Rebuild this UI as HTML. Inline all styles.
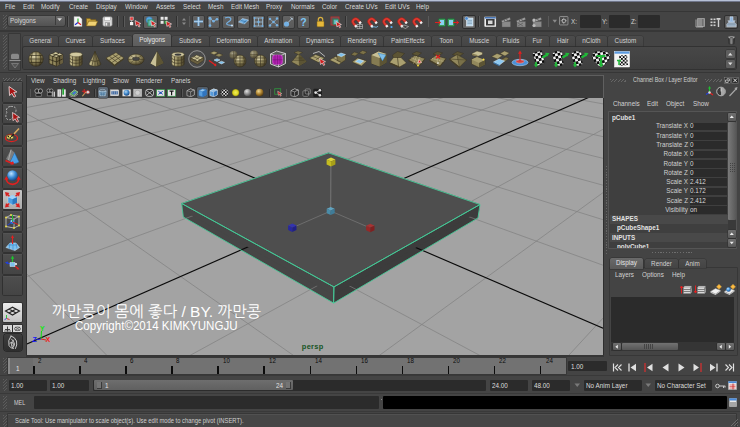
<!DOCTYPE html>
<html><head><meta charset="utf-8"><title>Maya</title>
<style>
html,body{margin:0;padding:0;background:#444;}
body{width:740px;height:427px;overflow:hidden;position:relative;font-family:"Liberation Sans","NanumGothic","Noto Sans CJK KR",sans-serif;font-size:7.200px;color:#d2d2d2;}
.a{position:absolute;}
.t{position:absolute;white-space:nowrap;line-height:10px;}
.f{position:absolute;background:#2b2b2b;border-radius:1px;}
.btn{position:absolute;background:#5a5a5a;border:1px solid #333;border-radius:2px;box-sizing:border-box;}
.sep{position:absolute;width:.7px;background:#303030;border-right:.7px solid #5a5a5a;}
.t{transform:scaleX(.88);transform-origin:0 0;}
.t.r{text-align:right;transform-origin:100% 0;}
.t.c{text-align:center;transform-origin:50% 0;}
.t.b{font-weight:bold;}
.grip{position:absolute;width:4px;background:repeating-linear-gradient(135deg,#5c5c5c 0 .8px,transparent .8px 2.200px);}
.hgrip{position:absolute;height:3px;background:repeating-linear-gradient(135deg,#666 0 .8px,transparent .8px 2.400px);}
.wm{position:absolute;white-space:nowrap;color:#fff;font-family:"Liberation Sans","NanumGothic","Noto Sans CJK KR",sans-serif;}
svg{overflow:hidden}
</style></head><body>

<div class="a" style="left:0;top:0;width:740px;height:1px;background:#b6c0d6"></div>
<div class="a" style="left:0;top:1px;width:740px;height:.6px;background:#70768a"></div>
<div class="t" style="left:4.5px;top:2.300px;color:#dadada">File</div>
<div class="t" style="left:22.5px;top:2.300px;color:#dadada">Edit</div>
<div class="t" style="left:41px;top:2.300px;color:#dadada">Modify</div>
<div class="t" style="left:69px;top:2.300px;color:#dadada">Create</div>
<div class="t" style="left:96px;top:2.300px;color:#dadada">Display</div>
<div class="t" style="left:124.5px;top:2.300px;color:#dadada">Window</div>
<div class="t" style="left:155.5px;top:2.300px;color:#dadada">Assets</div>
<div class="t" style="left:183px;top:2.300px;color:#dadada">Select</div>
<div class="t" style="left:207.5px;top:2.300px;color:#dadada">Mesh</div>
<div class="t" style="left:231px;top:2.300px;color:#dadada">Edit Mesh</div>
<div class="t" style="left:266px;top:2.300px;color:#dadada">Proxy</div>
<div class="t" style="left:291px;top:2.300px;color:#dadada">Normals</div>
<div class="t" style="left:322px;top:2.300px;color:#dadada">Color</div>
<div class="t" style="left:345px;top:2.300px;color:#dadada">Create UVs</div>
<div class="t" style="left:385px;top:2.300px;color:#dadada">Edit UVs</div>
<div class="t" style="left:416px;top:2.300px;color:#dadada">Help</div>
<div class="a" style="left:0;top:10.600px;width:740px;height:1.600px;background:#363636"></div>
<div class="grip" style="left:3px;top:15px;height:14px"></div>
<div class="a" style="left:7.5px;top:15.5px;width:57px;height:10px;border-radius:2px;background:linear-gradient(#676767,#525252);box-shadow:0 0 0 .6px #2c2c2c"></div>
<div class="a" style="left:54.5px;top:16px;width:.7px;height:9px;background:#3c3c3c"></div>
<svg class="a" style="left:56px;top:17.300px" width="8" height="6"><polygon points="1.2,1.2 6,1.2 3.6,4" fill="#d8d8d8"/></svg>
<div class="t" style="left:9.5px;top:15.5px;color:#d4d4d4">Polygons</div>
<div class="sep" style="left:67px;top:16px;height:11px"></div>
<div class="sep" style="left:117px;top:16px;height:11px"></div>
<div class="sep" style="left:123px;top:16px;height:11px"></div>
<div class="sep" style="left:176px;top:16px;height:11px"></div>
<div class="sep" style="left:188.5px;top:16px;height:11px"></div>
<div class="sep" style="left:345px;top:16px;height:11px"></div>
<div class="sep" style="left:427.5px;top:16px;height:11px"></div>
<div class="sep" style="left:478px;top:16px;height:11px"></div>
<div class="sep" style="left:547.5px;top:16px;height:11px"></div>
<svg class="a" style="left:73px;top:16px" width="10" height="11" viewBox="0 0 10 11"><path d="M1 .5h5.5l2.5 2.5v7.5h-8z" fill="#f4f4f4" stroke="#9a9a9a" stroke-width=".5"/><path d="M5 6.5V2.5" stroke="#20b020" stroke-width="1.1"/><path d="M5 6.5l-3 2.3" stroke="#2030d0" stroke-width="1.1"/><path d="M5 6.5l3 2.3" stroke="#e02020" stroke-width="1.1"/></svg>
<svg class="a" style="left:85.5px;top:17px" width="12" height="10" viewBox="0 0 12 10"><path d="M.5 9V1.5h3.5l1 1.2h5v2" fill="#c9a33a" stroke="#7a5c14" stroke-width=".6"/><path d="M.5 9l2.2-4.8h9L9.6 9z" fill="#f0d274" stroke="#7a5c14" stroke-width=".6"/></svg>
<svg class="a" style="left:102px;top:16px" width="11" height="11" viewBox="0 0 11 11"><rect x=".8" y=".8" width="9.4" height="9.4" rx="1.4" fill="#dcdcdc" stroke="#777" stroke-width=".6"/><rect x="2.6" y="1" width="5.8" height="3.6" fill="#fafafa" stroke="#888" stroke-width=".4"/><rect x="3" y="6.4" width="5" height="3.6" fill="#8a8a8a"/><rect x="3.6" y="7" width="1.6" height="2.6" fill="#e8e8e8"/></svg>
<svg class="a" style="left:129px;top:16px" width="13" height="12" viewBox="0 0 13 12"><rect x="1" y="1" width="3.2" height="3.2" fill="#e04040" stroke="#eee" stroke-width=".5"/><rect x="1" y="6" width="3.2" height="3.2" fill="#f0f0f0"/><path d="M2.6 4v2" stroke="#ddd" stroke-width=".6"/><path d="M6 4.5l5.8 3-2 .6 1.3 2.3-1.2.7-1.3-2.4-1.6 1.4z" fill="#d02020" stroke="#f4f4f4" stroke-width=".6"/></svg>
<div class="btn" style="left:143px;top:14.5px;width:14.5px;height:14px;background:#5f5f5f"></div>
<svg class="a" style="left:144.5px;top:16px" width="12" height="12" viewBox="0 0 12 12"><circle cx="4.2" cy="4" r="3.2" fill="#58a8e0" stroke="#2a6aa0" stroke-width=".5"/><rect x="3" y="4" width="6" height="6" fill="#5fb8b0" stroke="#2c8a50" stroke-width=".8"/><path d="M5.8 4.6l5.4 3-1.9.5 1.2 2.2-1.1.6-1.2-2.2-1.5 1.3z" fill="#d02020" stroke="#f4f4f4" stroke-width=".6"/></svg>
<svg class="a" style="left:160px;top:16px" width="13" height="12" viewBox="0 0 13 12"><rect x=".6" y=".8" width="3" height="3" fill="#e8e8e8"/><rect x="4.6" y=".8" width="3" height="3" fill="#e8e8e8"/><rect x=".6" y="4.8" width="3" height="3" fill="#e8e8e8"/><rect x="4.6" y="4.8" width="3" height="3" fill="#30b040"/><path d="M6 5l5.6 3-2 .6 1.3 2.2-1.2.7-1.3-2.3-1.5 1.3z" fill="#d02020" stroke="#f4f4f4" stroke-width=".6"/></svg>
<svg class="a" style="left:181px;top:17px" width="6" height="9"><polygon points="1,3.500 5,3.500 3,1" fill="#8a8a8a"/><polygon points="1,5.500 5,5.500 3,8" fill="#8a8a8a"/></svg>
<div class="btn" style="left:192px;top:14.5px;width:13px;height:14px;background:linear-gradient(#636363,#5a5a5a);border-color:#383838"></div>
<div class="btn" style="left:207px;top:14.5px;width:13px;height:14px;background:linear-gradient(#636363,#5a5a5a);border-color:#383838"></div>
<div class="btn" style="left:222px;top:14.5px;width:13px;height:14px;background:linear-gradient(#636363,#5a5a5a);border-color:#383838"></div>
<div class="btn" style="left:237px;top:14.5px;width:13px;height:14px;background:linear-gradient(#636363,#5a5a5a);border-color:#383838"></div>
<div class="btn" style="left:252px;top:14.5px;width:13px;height:14px;background:linear-gradient(#636363,#5a5a5a);border-color:#383838"></div>
<div class="btn" style="left:267px;top:14.5px;width:13px;height:14px;background:linear-gradient(#636363,#5a5a5a);border-color:#383838"></div>
<div class="btn" style="left:282px;top:14.5px;width:13px;height:14px;background:linear-gradient(#636363,#5a5a5a);border-color:#383838"></div>
<div class="btn" style="left:297px;top:14.5px;width:13px;height:14px;background:linear-gradient(#636363,#5a5a5a);border-color:#383838"></div>
<svg class="a" style="left:192px;top:14.5px" width="13" height="14" viewBox="0 0 13 14"><path d="M6.5 2v9M2 6.5h9" stroke="#74b0e2" stroke-width="2"/><path d="M6.5 2v9M2 6.5h9" stroke="#c4dcf0" stroke-width=".6"/></svg>
<svg class="a" style="left:207px;top:14.5px" width="13" height="14" viewBox="0 0 13 14"><path d="M3 11V3.5l3.5 2.8 3.5-2" fill="none" stroke="#a4c8e4" stroke-width=".8"/><circle cx="3" cy="3.2" r="1.5" fill="#74b0e2"/><circle cx="3" cy="10.6" r="1.3" fill="#74b0e2"/><circle cx="6.5" cy="6.3" r="1.3" fill="#74b0e2"/><circle cx="10" cy="4.3" r="1.3" fill="#74b0e2"/></svg>
<svg class="a" style="left:222px;top:14.5px" width="13" height="14" viewBox="0 0 13 14"><path d="M3 3c5-2 8 1 4 3.500S4 10 10 10.500" fill="none" stroke="#74b0e2" stroke-width="1.2"/><circle cx="10" cy="10.500" r="1.100" fill="#c4dcf0"/></svg>
<svg class="a" style="left:237px;top:14.5px" width="13" height="14" viewBox="0 0 13 14"><path d="M1.5 7l4-3.500 6 1.500-4 4z" fill="#74b0e2" stroke="#c4dcf0" stroke-width=".5"/><path d="M3.500 5.300l6 1.700M5.500 9l4-3.700" stroke="#2a6aa0" stroke-width=".6"/></svg>
<svg class="a" style="left:252px;top:14.5px" width="13" height="14" viewBox="0 0 13 14"><rect x="2.500" y="3" width="8" height="8" fill="none" stroke="#a4c8e4" stroke-width=".7"/><path d="M2.500 7h8M6.500 3v8" stroke="#a4c8e4" stroke-width=".7"/><circle cx="6.500" cy="7" r="1.200" fill="#74b0e2"/><circle cx="2.500" cy="3" r="1" fill="#74b0e2"/><circle cx="10.500" cy="3" r="1" fill="#74b0e2"/><circle cx="2.500" cy="11" r="1" fill="#74b0e2"/><circle cx="10.500" cy="11" r="1" fill="#74b0e2"/></svg>
<svg class="a" style="left:267px;top:14.5px" width="13" height="14" viewBox="0 0 13 14"><path d="M2.500 10.500l8-7M3 4l7 6" stroke="#a4c8e4" stroke-width=".6"/><circle cx="3" cy="4" r="1.200" fill="#74b0e2"/><circle cx="6.500" cy="7" r="1.300" fill="#74b0e2"/><circle cx="10" cy="3.500" r="1.200" fill="#74b0e2"/><circle cx="3" cy="10.500" r="1.200" fill="#74b0e2"/><circle cx="10" cy="10.300" r="1.200" fill="#74b0e2"/></svg>
<svg class="a" style="left:282px;top:14.5px" width="13" height="14" viewBox="0 0 13 14"><circle cx="4.500" cy="9" r="2.600" fill="#74b0e2"/><path d="M6 7.500l4.500-4.500M8.500 2.500l2.500 2" stroke="#c4dcf0" stroke-width=".8"/></svg>
<svg class="a" style="left:297px;top:14.5px" width="13" height="14" viewBox="0 0 13 14"><text x="6.500" y="10.800" text-anchor="middle" font-family="Liberation Sans,sans-serif" font-weight="bold" font-size="10.500" fill="#7ac4f4">?</text></svg>
<svg class="a" style="left:315.500px;top:15.500px" width="9" height="12" viewBox="0 0 9 12"><path d="M2.300 5.500V3.600a2.200 2.200 0 0 1 4.400 0v1.900" fill="none" stroke="#d8b040" stroke-width="1.200"/><rect x="1" y="5.200" width="7" height="5.600" rx=".8" fill="#e6b83a" stroke="#8a6a14" stroke-width=".5"/></svg>
<svg class="a" style="left:329.500px;top:15.500px" width="13" height="13" viewBox="0 0 13 13"><rect x="1" y="1" width="8" height="8" fill="#5a5a5a" stroke="#c03030" stroke-width=".9"/><rect x="3.300" y="3.300" width="5" height="5" fill="#60b8c0" stroke="#2c8a50" stroke-width=".6"/><path d="M6 5.500l5.400 3-1.900.5 1.200 2.200-1.100.6-1.200-2.200-1.500 1.300z" fill="#d02020" stroke="#f4f4f4" stroke-width=".6"/></svg>
<svg class="a" style="left:350px;top:15.500px" width="13" height="13" viewBox="0 0 13 13"><g transform="rotate(-40 6 6)"><path d="M2 9V5.500a4 4 0 0 1 8 0V9h-2.400V5.600a1.600 1.600 0 0 0-3.200 0V9z" fill="#e03a30" stroke="#8a1810" stroke-width=".4"/><rect x="2" y="8" width="2.400" height="2.200" fill="#f0f0f0"/><rect x="7.600" y="8" width="2.400" height="2.200" fill="#f0f0f0"/></g><path d="M7 8.500h5.500v4H7zM9.700 8.500v4M7 10.500h5.500" fill="none" stroke="#d8d8d8" stroke-width=".5"/></svg>
<svg class="a" style="left:365.5px;top:15.500px" width="13" height="13" viewBox="0 0 13 13"><g transform="rotate(-40 6 6)"><path d="M2 9V5.500a4 4 0 0 1 8 0V9h-2.400V5.600a1.600 1.600 0 0 0-3.200 0V9z" fill="#e03a30" stroke="#8a1810" stroke-width=".4"/><rect x="2" y="8" width="2.400" height="2.200" fill="#f0f0f0"/><rect x="7.600" y="8" width="2.400" height="2.200" fill="#f0f0f0"/></g><path d="M6 12c2-3 4 1 6-2" fill="none" stroke="#78c0f0" stroke-width=".9"/></svg>
<svg class="a" style="left:380.5px;top:15.500px" width="13" height="13" viewBox="0 0 13 13"><g transform="rotate(-40 6 6)"><path d="M2 9V5.500a4 4 0 0 1 8 0V9h-2.400V5.600a1.600 1.600 0 0 0-3.200 0V9z" fill="#e03a30" stroke="#8a1810" stroke-width=".4"/><rect x="2" y="8" width="2.400" height="2.200" fill="#f0f0f0"/><rect x="7.600" y="8" width="2.400" height="2.200" fill="#f0f0f0"/></g><circle cx="10.500" cy="11" r="1.100" fill="#58a8f0"/></svg>
<svg class="a" style="left:395.5px;top:15.500px" width="13" height="13" viewBox="0 0 13 13"><g transform="rotate(-40 6 6)"><path d="M2 9V5.500a4 4 0 0 1 8 0V9h-2.400V5.600a1.600 1.600 0 0 0-3.200 0V9z" fill="#e03a30" stroke="#8a1810" stroke-width=".4"/><rect x="2" y="8" width="2.400" height="2.200" fill="#f0f0f0"/><rect x="7.600" y="8" width="2.400" height="2.200" fill="#f0f0f0"/></g><path d="M5 10.500l3-1.500 4.500 1.500-3 2z" fill="none" stroke="#d8d8d8" stroke-width=".5"/></svg>
<svg class="a" style="left:411px;top:15.500px" width="13" height="13" viewBox="0 0 13 13"><g transform="rotate(-40 6 6)"><path d="M2 9V5.500a4 4 0 0 1 8 0V9h-2.400V5.600a1.600 1.600 0 0 0-3.200 0V9z" fill="#e03a30" stroke="#8a1810" stroke-width=".4"/><rect x="2" y="8" width="2.400" height="2.200" fill="#f0f0f0"/><rect x="7.600" y="8" width="2.400" height="2.200" fill="#f0f0f0"/></g></svg>
<svg class="a" style="left:434.500px;top:16.500px" width="11" height="11" viewBox="0 0 11 11"><rect x="3.500" y="1.500" width="7" height="8" rx="1" fill="#3a9a58" stroke="#1a5a30" stroke-width=".5"/><rect x="5" y="3" width="4" height="5" fill="#8ad0f0"/><path d="M0 5.500h5M3.500 3.800L5.600 5.500 3.500 7.200" fill="none" stroke="#e02020" stroke-width="1"/></svg>
<svg class="a" style="left:447px;top:16.500px" width="12" height="11" viewBox="0 0 12 11"><rect x=".5" y="1.500" width="7" height="8" rx="1" fill="#3a9a58" stroke="#1a5a30" stroke-width=".5"/><rect x="2" y="3" width="4" height="5" fill="#8ad0f0"/><path d="M6 5.500h5.500M9.400 3.800l2.100 1.700-2.100 1.700" fill="none" stroke="#e02020" stroke-width="1"/></svg>
<div class="btn" style="left:462px;top:14.500px;width:13.500px;height:14px;background:#646464;border-color:#2e2e2e"></div>
<svg class="a" style="left:463.500px;top:16px" width="11" height="11" viewBox="0 0 11 11"><rect x="2.500" y="2" width="6.500" height="8" fill="#b8d4e8" stroke="#e8f0f8" stroke-width=".6"/><path d="M3.500 4.500h4.500M3.500 6h4.500M3.500 7.500h4.500" stroke="#7090a8" stroke-width=".5"/><circle cx="2.600" cy="2.400" r="1.700" fill="#4a8ad0" stroke="#e8f0f8" stroke-width=".4"/></svg>
<svg class="a" style="left:484px;top:16px" width="13" height="12" viewBox="0 0 13 12"><rect x=".8" y="1" width="11" height="9.500" fill="#f0f0f0" stroke="#fff" stroke-width=".5"/><rect x="2" y="3" width="8.600" height="6.500" fill="#3a3a3a"/><rect x="4" y="4.500" width="4.500" height="3.500" fill="#d8d8d8"/><rect x=".8" y="1" width="11" height="1.600" fill="#4a78b8"/></svg>
<svg class="a" style="left:500px;top:16px" width="12" height="12" viewBox="0 0 12 12"><path d="M2 5.500h8.500V11H2z" fill="#8a8a8a" stroke="#5a5a5a" stroke-width=".4"/><path d="M1.500 4.800L9.800 1.600l.7 1.900L2.200 6.600z" fill="#a8a8a8" stroke="#5a5a5a" stroke-width=".4"/><path d="M4 3.900l1 1.700M6.500 2.900l1 1.700" stroke="#4a4a4a" stroke-width=".8"/></svg>
<svg class="a" style="left:515px;top:16px" width="12" height="12" viewBox="0 0 12 12"><path d="M2 5.500h8.500V11H2z" fill="#8a8a8a" stroke="#5a5a5a" stroke-width=".4"/><path d="M1.500 4.800L9.800 1.600l.7 1.900L2.200 6.600z" fill="#a8a8a8" stroke="#5a5a5a" stroke-width=".4"/><path d="M4 3.900l1 1.700M6.500 2.900l1 1.700" stroke="#4a4a4a" stroke-width=".8"/><path d="M3 7l5 3M8 7l-5 3" stroke="#555" stroke-width=".6"/></svg>
<svg class="a" style="left:530.5px;top:16px" width="12" height="12" viewBox="0 0 12 12"><path d="M2 5.500h8.500V11H2z" fill="#8a8a8a" stroke="#5a5a5a" stroke-width=".4"/><path d="M1.500 4.800L9.800 1.600l.7 1.900L2.200 6.600z" fill="#a8a8a8" stroke="#5a5a5a" stroke-width=".4"/><path d="M4 3.900l1 1.700M6.500 2.900l1 1.700" stroke="#4a4a4a" stroke-width=".8"/><circle cx="3" cy="4" r="1.600" fill="#bbb"/><circle cx="3" cy="9.500" r="1.600" fill="#bbb"/></svg>
<svg class="a" style="left:552.300px;top:19px" width="6" height="5"><polygon points=".5,.8 5,.8 2.800,3.800" fill="#8a8a8a"/></svg>
<svg class="a" style="left:559px;top:16px" width="9.500" height="9.500" viewBox="0 0 11 11"><rect x=".6" y=".6" width="9.800" height="9.800" rx="1" fill="#4a4a4a" stroke="#b8b8b8" stroke-width=".7"/><path d="M5.500 2v7M2 5.500h7" stroke="#d8d8d8" stroke-width=".7"/><rect x="3.800" y="3.800" width="3.400" height="3.400" fill="#4a4a4a" stroke="#d8d8d8" stroke-width=".6"/></svg>
<div class="t" style="left:571px;top:16.500px">X:</div>
<div class="f" style="left:579.5px;top:14.500px;width:21.500px;height:13.500px"></div>
<div class="t" style="left:601.5px;top:16.500px">Y:</div>
<div class="f" style="left:608.5px;top:14.500px;width:21.500px;height:13.500px"></div>
<div class="t" style="left:631px;top:16.500px">Z:</div>
<div class="f" style="left:638px;top:14.500px;width:21.500px;height:13.500px"></div>
<svg class="a" style="left:694.500px;top:16.500px" width="11" height="11" viewBox="0 0 11 11"><path d="M2.500 1.500h7v8h-7z" fill="#8c8c8c" stroke="#c8c8c8" stroke-width=".5"/><path d="M1 2.500v7.500h7" fill="none" stroke="#c8c8c8" stroke-width=".7"/><path d="M7.800 2v7" stroke="#5a5a5a" stroke-width=".8"/></svg>
<svg class="a" style="left:709.500px;top:16.500px" width="11" height="11" viewBox="0 0 11 11"><g fill="#d0d0d0"><rect x=".5" y="1.500" width="2" height="1.600"/><rect x="3.500" y="1.500" width="2" height="1.600"/><rect x=".5" y="4.500" width="2" height="1.600"/><rect x="3.500" y="4.500" width="2" height="1.600"/><rect x=".5" y="7.500" width="2" height="1.600"/><rect x="3.500" y="7.500" width="2" height="1.600"/><rect x="7.800" y="2.500" width="1.400" height="7.500"/><rect x="6.500" y="1" width="4" height="1.800"/></g></svg>
<div class="btn" style="left:724px;top:14.500px;width:14px;height:14.500px;background:#5e5e5e;border-color:#303030"></div>
<svg class="a" style="left:725.500px;top:15.500px" width="11" height="12" viewBox="0 0 11 12"><path d="M4 .8h3v4h2.200l-3.700 3.200L1.800 4.800h2.200z" fill="#8fb4dc" stroke="#dce8f4" stroke-width=".5"/><path d="M.8 8l2.400-2h4.600L10.200 8v2.800H.8z" fill="#9cb0c4" stroke="#d8e0e8" stroke-width=".5"/><path d="M.8 8h9.400" stroke="#6a7c8e" stroke-width=".5"/></svg>
<div class="a" style="left:0;top:30px;width:740px;height:1.500px;background:#373737"></div>
<div class="grip" style="left:3px;top:35px;height:34px"></div>
<div class="a" style="left:8.700px;top:34px;width:11.300px;height:36px;background:#4a4a4a;box-shadow:0 0 0 .7px #333"></div>
<svg class="a" style="left:9px;top:52px" width="12" height="18" viewBox="0 0 12 18"><path d="M2.500 6.500V3.200q0-1 1-1h5q1 0 1 1v3.300z" fill="#8a8a8a" stroke="#aaa" stroke-width=".5"/><path d="M.5 8.500h11" stroke="#9a9a9a" stroke-width=".9"/><path d="M2.500 11.500h7l-3.500 4.500z" fill="#555" stroke="#8a8a8a" stroke-width=".7"/></svg>
<div class="a" style="left:22.5px;top:35.500px;width:35.0px;height:11px;background:linear-gradient(#4c4c4c,#444);border-radius:2px 2px 0 0;box-shadow:0 0 0 .6px #343434"></div>
<div class="t c" style="left:22.5px;width:35.0px;top:35.6px;color:#d2d2d2">General</div>
<div class="a" style="left:58.5px;top:35.500px;width:33.0px;height:11px;background:linear-gradient(#4c4c4c,#444);border-radius:2px 2px 0 0;box-shadow:0 0 0 .6px #343434"></div>
<div class="t c" style="left:58.5px;width:33.0px;top:35.6px;color:#d2d2d2">Curves</div>
<div class="a" style="left:92.5px;top:35.500px;width:39.0px;height:11px;background:linear-gradient(#4c4c4c,#444);border-radius:2px 2px 0 0;box-shadow:0 0 0 .6px #343434"></div>
<div class="t c" style="left:92.5px;width:39.0px;top:35.6px;color:#d2d2d2">Surfaces</div>
<div class="a" style="left:132.5px;top:34px;width:38.5px;height:13px;background:linear-gradient(#686868,#5c5c5c);border-radius:2px 2px 0 0;box-shadow:0 0 0 .6px #2e2e2e"></div>
<div class="t c" style="left:132.5px;width:38.5px;top:35.3px;color:#e6e6e6">Polygons</div>
<div class="a" style="left:172px;top:35.500px;width:36.5px;height:11px;background:linear-gradient(#4c4c4c,#444);border-radius:2px 2px 0 0;box-shadow:0 0 0 .6px #343434"></div>
<div class="t c" style="left:172px;width:36.5px;top:35.6px;color:#d2d2d2">Subdivs</div>
<div class="a" style="left:209.5px;top:35.500px;width:47.5px;height:11px;background:linear-gradient(#4c4c4c,#444);border-radius:2px 2px 0 0;box-shadow:0 0 0 .6px #343434"></div>
<div class="t c" style="left:209.5px;width:47.5px;top:35.6px;color:#d2d2d2">Deformation</div>
<div class="a" style="left:258px;top:35.500px;width:40.5px;height:11px;background:linear-gradient(#4c4c4c,#444);border-radius:2px 2px 0 0;box-shadow:0 0 0 .6px #343434"></div>
<div class="t c" style="left:258px;width:40.5px;top:35.6px;color:#d2d2d2">Animation</div>
<div class="a" style="left:299.5px;top:35.500px;width:40.0px;height:11px;background:linear-gradient(#4c4c4c,#444);border-radius:2px 2px 0 0;box-shadow:0 0 0 .6px #343434"></div>
<div class="t c" style="left:299.5px;width:40.0px;top:35.6px;color:#d2d2d2">Dynamics</div>
<div class="a" style="left:340.5px;top:35.500px;width:42.0px;height:11px;background:linear-gradient(#4c4c4c,#444);border-radius:2px 2px 0 0;box-shadow:0 0 0 .6px #343434"></div>
<div class="t c" style="left:340.5px;width:42.0px;top:35.6px;color:#d2d2d2">Rendering</div>
<div class="a" style="left:383.5px;top:35.500px;width:47.5px;height:11px;background:linear-gradient(#4c4c4c,#444);border-radius:2px 2px 0 0;box-shadow:0 0 0 .6px #343434"></div>
<div class="t c" style="left:383.5px;width:47.5px;top:35.6px;color:#d2d2d2">PaintEffects</div>
<div class="a" style="left:432px;top:35.500px;width:28.5px;height:11px;background:linear-gradient(#4c4c4c,#444);border-radius:2px 2px 0 0;box-shadow:0 0 0 .6px #343434"></div>
<div class="t c" style="left:432px;width:28.5px;top:35.6px;color:#d2d2d2">Toon</div>
<div class="a" style="left:461.5px;top:35.500px;width:34.5px;height:11px;background:linear-gradient(#4c4c4c,#444);border-radius:2px 2px 0 0;box-shadow:0 0 0 .6px #343434"></div>
<div class="t c" style="left:461.5px;width:34.5px;top:35.6px;color:#d2d2d2">Muscle</div>
<div class="a" style="left:497px;top:35.500px;width:28px;height:11px;background:linear-gradient(#4c4c4c,#444);border-radius:2px 2px 0 0;box-shadow:0 0 0 .6px #343434"></div>
<div class="t c" style="left:497px;width:28px;top:35.6px;color:#d2d2d2">Fluids</div>
<div class="a" style="left:526px;top:35.500px;width:22.5px;height:11px;background:linear-gradient(#4c4c4c,#444);border-radius:2px 2px 0 0;box-shadow:0 0 0 .6px #343434"></div>
<div class="t c" style="left:526px;width:22.5px;top:35.6px;color:#d2d2d2">Fur</div>
<div class="a" style="left:549.5px;top:35.500px;width:25.5px;height:11px;background:linear-gradient(#4c4c4c,#444);border-radius:2px 2px 0 0;box-shadow:0 0 0 .6px #343434"></div>
<div class="t c" style="left:549.5px;width:25.5px;top:35.6px;color:#d2d2d2">Hair</div>
<div class="a" style="left:576px;top:35.500px;width:31px;height:11px;background:linear-gradient(#4c4c4c,#444);border-radius:2px 2px 0 0;box-shadow:0 0 0 .6px #343434"></div>
<div class="t c" style="left:576px;width:31px;top:35.6px;color:#d2d2d2">nCloth</div>
<div class="a" style="left:608px;top:35.500px;width:35px;height:11px;background:linear-gradient(#4c4c4c,#444);border-radius:2px 2px 0 0;box-shadow:0 0 0 .6px #343434"></div>
<div class="t c" style="left:608px;width:35px;top:35.6px;color:#d2d2d2">Custom</div>
<svg class="a" style="left:727px;top:35px" width="9" height="10" viewBox="0 0 9 10"><linearGradient id="tg" x1="0" x2="1"><stop offset="0" stop-color="#3a3a3a"/><stop offset=".45" stop-color="#8c8c8c"/><stop offset="1" stop-color="#333"/></linearGradient><path d="M1.300 2.500h6.400l-.6 6.300q-2.600 1.200-5.200 0z" fill="url(#tg)" stroke="#262626" stroke-width=".5"/><path d="M2.600 3.500v5.300M6.400 3.500v5.300" stroke="#2e2e2e" stroke-width=".7"/><ellipse cx="4.500" cy="2.300" rx="3.300" ry="1.300" fill="#b8b8b8" stroke="#444" stroke-width=".5"/><ellipse cx="4.500" cy="2.300" rx="1.800" ry=".6" fill="#555"/></svg>
<div class="a" style="left:22.500px;top:47px;width:713.500px;height:21.800px;background:linear-gradient(#474747,#3f3f3f);box-shadow:0 0 0 .8px #2c2c2c;border-radius:1.500px"></div>
<div class="a" style="left:726px;top:50px;width:8.500px;height:8px;background:#5e5e5e;border-radius:1px;box-shadow:0 0 0 .5px #333"></div>
<div class="a" style="left:726px;top:60px;width:8.500px;height:8px;background:#5e5e5e;border-radius:1px;box-shadow:0 0 0 .5px #333"></div>
<svg class="a" style="left:726px;top:50px" width="9" height="18"><polygon points="2,5.500 6.500,5.500 4.250,2.800" fill="#ddd"/><polygon points="2,12.500 6.500,12.500 4.250,15.300" fill="#ddd"/></svg>
<svg width="0" height="0" style="position:absolute"><defs>
<radialGradient id="gs" cx=".38" cy=".32" r=".75"><stop offset="0" stop-color="#e2dab4"/><stop offset=".5" stop-color="#92885c"/><stop offset="1" stop-color="#3a3220"/></radialGradient>
<linearGradient id="gc" x1="0" x2="1"><stop offset="0" stop-color="#cdc496"/><stop offset=".5" stop-color="#92885c"/><stop offset="1" stop-color="#463e26"/></linearGradient>
<radialGradient id="bs" cx=".38" cy=".32" r=".75"><stop offset="0" stop-color="#bfe2ff"/><stop offset=".5" stop-color="#3f8fd8"/><stop offset="1" stop-color="#123c78"/></radialGradient>
<radialGradient id="ys" cx=".5" cy=".5" r=".5"><stop offset="0" stop-color="#ffff60"/><stop offset=".7" stop-color="#e8e020"/><stop offset="1" stop-color="#8a8610"/></radialGradient>
<radialGradient id="grs" cx=".38" cy=".32" r=".75"><stop offset="0" stop-color="#f0f0f0"/><stop offset=".5" stop-color="#9a9a9a"/><stop offset="1" stop-color="#444"/></radialGradient>
<radialGradient id="gos" cx=".38" cy=".32" r=".75"><stop offset="0" stop-color="#ffe8a0"/><stop offset=".5" stop-color="#b88a30"/><stop offset="1" stop-color="#4a3008"/></radialGradient>
<pattern id="chk" width="5.400" height="5.400" patternUnits="userSpaceOnUse" patternTransform="rotate(-12)"><rect width="5.400" height="5.400" fill="#f4f4f4"/><rect width="2.700" height="2.700" fill="#0c0c0c"/><rect x="2.700" y="2.700" width="2.700" height="2.700" fill="#0c0c0c"/></pattern><pattern id="chks" width="3.600" height="3.600" patternUnits="userSpaceOnUse"><rect width="3.600" height="3.600" fill="#f4f4f4"/><rect width="1.800" height="1.800" fill="#0c0c0c"/><rect x="1.800" y="1.800" width="1.800" height="1.800" fill="#0c0c0c"/></pattern>
</defs></svg>
<svg class="a" style="left:25.700000000000003px;top:48.5px" width="20" height="20" viewBox="0 0 20 20"><circle cx="10" cy="10" r="7.300" fill="url(#gs)" stroke="#332c1a" stroke-width=".5"/><path d="M2.700 10h14.600M3.600 6.500h12.800M3.600 13.500h12.800M10 2.700v14.600M6.300 3.600q-2.500 6.400 0 12.800M13.700 3.600q2.500 6.400 0 12.800" fill="none" stroke="#2e2816" stroke-width=".65"/></svg>
<svg class="a" style="left:46.0px;top:48.5px" width="20" height="20" viewBox="0 0 20 20"><path d="M3.200 6.200l6.300-3 7.300 2.200v8.600l-6.500 3.200-7.100-2.700z" fill="#92885c" stroke="#2a2414" stroke-width=".6"/><path d="M3.200 6.200l6.300-3 7.300 2.200-6.500 3z" fill="#d2caa0"/><path d="M10.300 8.400v8.800l6.500-3.200V5.400z" fill="#6a6040"/><path d="M3.200 10.400l7.100 2.500 6.500-3M6.700 7.300v8.600M13.600 6.900v8.600M6.300 4.700l7.300 2.200M13 4.300l-6.300 3M3.200 6.200l7.100 2.200 6.500-3M10.300 8.400v8.800" fill="none" stroke="#2a2414" stroke-width=".75"/></svg>
<svg class="a" style="left:66.0px;top:48.5px" width="20" height="20" viewBox="0 0 20 20"><path d="M3.800 5.500v9.500a6.200 2.300 0 0 0 12.400 0V5.500z" fill="url(#gc)" stroke="#332c1a" stroke-width=".5"/><ellipse cx="10" cy="5.500" rx="6.200" ry="2.300" fill="#d2caa0" stroke="#463e26" stroke-width=".5"/><path d="M3.800 9a6.200 2.300 0 0 0 12.400 0M3.800 12a6.200 2.300 0 0 0 12.400 0M6.500 7.500v9.300M10 7.800v9.500M13.500 7.500v9.300" fill="none" stroke="#3c3420" stroke-width=".65"/></svg>
<svg class="a" style="left:85.0px;top:48.5px" width="20" height="20" viewBox="0 0 20 20"><path d="M10 2.500L4 15a6 2.200 0 0 0 12 0z" fill="url(#gc)" stroke="#332c1a" stroke-width=".5"/><path d="M10 2.500L7 16.800M10 2.500v14.700M10 2.500l3 14.300M6 11.500q4 1.800 8 0" fill="none" stroke="#3c3420" stroke-width=".65"/></svg>
<svg class="a" style="left:105.0px;top:48.5px" width="20" height="20" viewBox="0 0 20 20"><path d="M1 9l10-5.500 8 5.500-9.500 7z" fill="#aaa070" stroke="#332c1a" stroke-width=".5"/><path d="M1 9l8.500 7v1.400L1 10.300zM19 9l-9.500 7v1.400L19 10.300z" fill="#463e26"/><path d="M4.300 7.200l8.400 6.500M7.600 5.300l8.200 6M3.800 11.300l9.900-5.900M6.700 13.700L16.400 7.200" fill="none" stroke="#3c3420" stroke-width=".6"/></svg>
<svg class="a" style="left:126.0px;top:48.5px" width="20" height="20" viewBox="0 0 20 20"><ellipse cx="10" cy="10.500" rx="8" ry="5.500" fill="url(#gs)" stroke="#332c1a" stroke-width=".5"/><ellipse cx="10" cy="9.800" rx="3.600" ry="1.900" fill="#454545" stroke="#332c1a" stroke-width=".5"/><path d="M10 5v3M10 11.700v4.300M2 10.500h4.400M13.600 10.500H18M4.300 6.700l3.300 2M15.700 6.700l-3.300 2M4.300 14.300l3.300-3M15.700 14.300l-3.300-3" stroke="#3c3420" stroke-width=".5"/></svg>
<svg class="a" style="left:147.0px;top:48.5px" width="20" height="20" viewBox="0 0 20 20"><path d="M10 2.500L3.500 14.500l5.500 3 7.500-3.500z" fill="#92885c" stroke="#332c1a" stroke-width=".5"/><path d="M10 2.500L3.500 14.500l5.500 3z" fill="#c8c096"/><path d="M10 2.500l-1 15 7.500-3.500z" fill="#5c5434"/></svg>
<svg class="a" style="left:167.5px;top:48.5px" width="20" height="20" viewBox="0 0 20 20"><path d="M3.800 5.500v9.500a6.200 2.300 0 0 0 12.400 0V5.500z" fill="url(#gc)" stroke="#332c1a" stroke-width=".5"/><ellipse cx="10" cy="5.500" rx="6.200" ry="2.300" fill="#d2caa0" stroke="#463e26" stroke-width=".5"/><ellipse cx="10" cy="5.600" rx="3.400" ry="1.200" fill="#3c3c3c"/><path d="M3.800 9a6.200 2.300 0 0 0 12.400 0M3.800 12a6.200 2.300 0 0 0 12.400 0M6.500 7.500v9.300M10 7.800v9.500M13.500 7.500v9.300" fill="none" stroke="#3c3420" stroke-width=".65"/></svg>
<svg class="a" style="left:187.0px;top:48.5px" width="20" height="20" viewBox="0 0 20 20"><circle cx="10" cy="10" r="8.300" fill="#4a4a4a" stroke="#9c9c9c" stroke-width=".9"/><path d="M3.500 9l6-3 7 2.500-6 4z" fill="#c8c096" stroke="#332c1a" stroke-width=".4"/><path d="M3.500 9v3l7 3.500 6-4v-3l-6 4z" fill="#6a6040" stroke="#332c1a" stroke-width=".4"/><path d="M6.500 7.500l6.500 3.200M9 6.300l-5 4M13 7.300l-6 4" stroke="#3c3420" stroke-width=".5"/></svg>
<svg class="a" style="left:207.0px;top:48.5px" width="20" height="20" viewBox="0 0 20 20"><path d="M3 4l4-1.800 4 1.500-4 2z" fill="#aaa070" stroke="#332c1a" stroke-width=".4"/><path d="M8 6.200l4-1.800 4 1.500-4 2z" fill="#92885c" stroke="#332c1a" stroke-width=".4"/><path d="M7 11l3-1.300 3 1.200-3 1.500zM11.500 13.500l3-1.300 3 1.200-3 1.500z" fill="#7ec0ec" stroke="#d8ecfa" stroke-width=".5"/><path d="M2 11.500l7 5-1.700-.2M9 16.500l-.8-1.800" stroke="#e02020" stroke-width="1.300" fill="none"/></svg>
<svg class="a" style="left:227.5px;top:48.5px" width="20" height="20" viewBox="0 0 20 20"><circle cx="5.500" cy="6" r="4" fill="url(#gs)" opacity=".6"/><path d="M1.500 6h8M5.500 2v8" stroke="#3c3420" stroke-width=".4"/><circle cx="12" cy="12" r="6" fill="url(#gs)" stroke="#332c1a" stroke-width=".5"/><path d="M6 12h12M12 6v12M8.500 7.500q-2 4.500 0 9M15.500 7.500q2 4.500 0 9M6.800 9h10.400M6.800 15h10.400" fill="none" stroke="#3c3420" stroke-width=".65"/></svg>
<svg class="a" style="left:248.0px;top:48.5px" width="20" height="20" viewBox="0 0 20 20"><circle cx="6" cy="5.500" r="4" fill="url(#gs)" opacity=".7"/><path d="M2 5.500h8M6 1.500v8" stroke="#3c3420" stroke-width=".4"/><circle cx="12.500" cy="12" r="6" fill="url(#gs)" stroke="#332c1a" stroke-width=".5"/><path d="M6.500 12h12M12.500 6v12M9 7.500q-2 4.500 0 9M16 7.500q2 4.500 0 9M7.300 9h10.400M7.300 15h10.400" fill="none" stroke="#3c3420" stroke-width=".65"/></svg>
<svg class="a" style="left:268.0px;top:48.5px" width="20" height="20" viewBox="0 0 20 20"><path d="M2.500 5l6-3 9 2.500v10l-7 3.500-8-3z" fill="#5a5a5a" stroke="#e8e8e8" stroke-width=".8"/><path d="M2.500 5l8 2.500 7-3M10.500 7.500V18" fill="none" stroke="#e8e8e8" stroke-width=".7"/><rect x="4.500" y="6" width="10" height="9.500" rx="2.500" fill="#b020b0" stroke="#e060e0" stroke-width=".5"/><path d="M4.500 10.800h10M9.500 6v9.500M7 6.200v9M12 6.200v9" stroke="#701070" stroke-width=".5"/></svg>
<svg class="a" style="left:289.0px;top:48.5px" width="20" height="20" viewBox="0 0 20 20"><path d="M2.500 13l7-8.500 8 8-7.500 4.500z" fill="#92885c" stroke="#332c1a" stroke-width=".5"/><path d="M9.500 4.500l.5 12.500 7.500-4.500z" fill="#5c5434"/><path d="M5 3.500l4-1.500 4.500 1.500-4 2z" fill="#7c7248" stroke="#332c1a" stroke-width=".4"/><path d="M6 9l7.500 0M4.200 11.200l11.300 0" stroke="#332c1a" stroke-width=".5"/></svg>
<svg class="a" style="left:307.5px;top:48.5px" width="20" height="20" viewBox="0 0 20 20"><path d="M1.500 9l6-3.500 9 3.500-6 4.500z" fill="#aaa070" stroke="#332c1a" stroke-width=".5"/><path d="M5 4.500l6-2 6 5" fill="none" stroke="#e8e8e8" stroke-width=".7"/><path d="M4.500 7.300l9 3.700M8 10.800l5-3.600" stroke="#3c3420" stroke-width=".5"/><path d="M11.500 9.500l6 3.200-2.100.6 1.400 2.500-1.200.7-1.400-2.500-1.700 1.500z" fill="#d02020" stroke="#f4f4f4" stroke-width=".6"/></svg>
<svg class="a" style="left:328.0px;top:48.5px" width="20" height="20" viewBox="0 0 20 20"><path d="M1.500 11l6-3.500 10 3-6.500 5z" fill="#aaa070" stroke="#332c1a" stroke-width=".5"/><path d="M9 6l4-2 4.500 1.500v5.500l-4 2.500-4.500-2z" fill="#7c7248" stroke="#332c1a" stroke-width=".4"/><path d="M9 6l4-2 4.500 1.500-4 2.200z" fill="#7ec0ec" stroke="#d8ecfa" stroke-width=".5"/><path d="M5 9l8 4.500" stroke="#3c3420" stroke-width=".5"/></svg>
<svg class="a" style="left:348.5px;top:48.5px" width="20" height="20" viewBox="0 0 20 20"><path d="M2 5.500l3.500-2.500 4 1.500-3.500 2.500zM10 4l3.500-2.500 4.500 1.500-3.500 2.500z" fill="#7c7248" stroke="#332c1a" stroke-width=".4"/><path d="M3 13l5.500-4 9.500 3-5.500 5z" fill="#aaa070" stroke="#332c1a" stroke-width=".5"/><path d="M6.500 12.600l3.200-2.300 5 1.600-3.200 2.700z" fill="#8cc8f0" stroke="#e0f0fc" stroke-width=".5"/></svg>
<svg class="a" style="left:369.0px;top:48.5px" width="20" height="20" viewBox="0 0 20 20"><path d="M2.500 6l7-3.500 8 2.500v8.500l-7 4-8-3z" fill="#92885c" stroke="#332c1a" stroke-width=".5"/><path d="M2.500 6l8 3V17.500l-8-3z" fill="#857b52"/><path d="M2.500 6l7-3.500 8 2.500-7 4z" fill="#c8c096"/><path d="M10.500 9l7-4v8.500l-7 4z" fill="#5c5434"/><path d="M9 4l8 2-3.500 6z" fill="#7ec0ec" stroke="#2a6aa0" stroke-width=".4"/></svg>
<svg class="a" style="left:387.5px;top:48.5px" width="20" height="20" viewBox="0 0 20 20"><path d="M4.500 6l5-3.500 7 2-4 4-7 .5z" fill="#5c5434" stroke="#332c1a" stroke-width=".4"/><path d="M1.500 13.500l4-5 7.500 0 5.500 5.500-7 4z" fill="#aaa070" stroke="#332c1a" stroke-width=".5"/><path d="M9.500 8.500l1 9" stroke="#332c1a" stroke-width=".6"/><path d="M1.500 13.500v1.200l10 4.300v-1.500z" fill="#463e26"/></svg>
<svg class="a" style="left:407.0px;top:48.5px" width="20" height="20" viewBox="0 0 20 20"><path d="M5 5l4.500-2.500 5 1.500-4 3z" fill="#5c5434" stroke="#332c1a" stroke-width=".4"/><path d="M1.500 11l6-4.500 10.500 3-6 7.500z" fill="#92885c" stroke="#332c1a" stroke-width=".5"/><path d="M1.500 11v1.300l10.500 6v-1.300zM18 9.500v1.300l-6 7.500v-1.300z" fill="#463e26"/><path d="M4.500 8.800l10 5M9.500 7l-3 7.500M13 8l-3.500 8" stroke="#e8e0b0" stroke-width=".5" stroke-dasharray="1 .8"/><path d="M12 10.500l2.500 3-3.500.5z" fill="#e02020" stroke="#fff" stroke-width=".5"/><circle cx="11" cy="16.500" r=".9" fill="#ffe040"/></svg>
<svg class="a" style="left:427.5px;top:48.5px" width="20" height="20" viewBox="0 0 20 20"><path d="M5 5l4.500-2.500 5 1.500-4 3z" fill="#5c5434" stroke="#332c1a" stroke-width=".4"/><path d="M1.500 11l6-4.500 10.500 3-6 7.500z" fill="#92885c" stroke="#332c1a" stroke-width=".5"/><path d="M1.500 11v1.300l10.500 6v-1.300zM18 9.500v1.300l-6 7.500v-1.300z" fill="#463e26"/><path d="M8.500 7l1.500 10M4 9.500l12 3" stroke="#e8e0b0" stroke-width=".5" stroke-dasharray="1 .8"/><path d="M8 6l4 3.500M12 6L8 9.500" stroke="#e02020" stroke-width="1.100"/><circle cx="10" cy="14" r=".8" fill="#fff"/></svg>
<svg class="a" style="left:448.0px;top:48.5px" width="20" height="20" viewBox="0 0 20 20"><path d="M4.500 5.500l5-3 6 2-4.500 3z" fill="#5c5434" stroke="#332c1a" stroke-width=".4"/><path d="M1.500 10l7.500-4.500 9.500 5.500-7 7z" fill="#92885c" stroke="#332c1a" stroke-width=".5"/><path d="M9 5.500l2.500 12.500M1.500 10l17 1" stroke="#332c1a" stroke-width=".5"/><path d="M9 5.500l9.500 5.500-7 7z" fill="#5c5434" opacity=".45"/><path d="M1.500 10v1.200l10 8v-1.200z" fill="#463e26"/></svg>
<svg class="a" style="left:468.0px;top:48.5px" width="20" height="20" viewBox="0 0 20 20"><path d="M4 4.500l5-2.500 5.500 1.500v2l-5 2-5.500-1.500z" fill="#c8c096" stroke="#332c1a" stroke-width=".4"/><path d="M4 6v-1.500l5.500 1.500v1.500z" fill="#857b52"/><path d="M3.500 10.500l5.500-2.500 8 3v4.500l-6 3-7.500-3.500z" fill="#92885c" stroke="#332c1a" stroke-width=".5"/><path d="M3.500 10.500l7.500 3.500 6-3-8-3z" fill="#aaa070"/><path d="M11 14l6-3v4.500l-6 3z" fill="#5c5434"/><circle cx="15.500" cy="10.500" r="1" fill="#ffe040"/></svg>
<svg class="a" style="left:489.5px;top:48.5px" width="20" height="20" viewBox="0 0 20 20"><path d="M1.500 7.500l5.500-3 5.500 2-5 3.500zM10 4.500l4.500-2.500 5 2-4.500 3z" fill="#aaa070" stroke="#332c1a" stroke-width=".4"/><path d="M11.500 10.500l4.500-2.500 3 1.500-4.500 3.500z" fill="#7c7248" stroke="#332c1a" stroke-width=".4"/><path d="M3.500 13l5.500-3 5.500 2-5 4z" fill="#8cc8f0" stroke="#e0f0fc" stroke-width=".5"/><path d="M3.500 13v1.200l6 3v-1.200z" fill="#3a78b0"/></svg>
<svg class="a" style="left:510.0px;top:48.5px" width="20" height="20" viewBox="0 0 20 20"><ellipse cx="10" cy="13.500" rx="8" ry="3.200" fill="#4a90d8" stroke="#a8d0f4" stroke-width=".6"/><ellipse cx="10" cy="12.500" rx="4" ry="1.700" fill="#d04040" stroke="#f0b0b0" stroke-width=".5"/><path d="M10 12V4" stroke="#e02020" stroke-width="1.200"/><path d="M10 1.500l2 3.200h-4z" fill="#e02020"/></svg>
<svg class="a" style="left:530.5px;top:48.5px" width="20" height="20" viewBox="0 0 20 20"><path d="M1.500 4l9-2.500 3.500 12-8.500 4z" fill="url(#chk)" stroke="#1a1a1a" stroke-width=".5"/><path d="M11.500 8.500l5-3" stroke="#20b838" stroke-width="2.200" fill="none"/><path d="M18.500 4l-4.500-.3 2.300 3.800z" fill="#20b838"/><path d="M5 13v3" stroke="#20b838" stroke-width="1.800"/><path d="M5 18.500l-2.200-3h4.400z" fill="#20b838"/></svg>
<svg class="a" style="left:550.5px;top:48.5px" width="20" height="20" viewBox="0 0 20 20"><path d="M1.500 4q5-3.500 10-.5 1 4-1 7 2.500 2 2 5-5 3-8 0Q1 9 1.500 4z" fill="url(#chk)" stroke="#1a1a1a" stroke-width=".5"/><path d="M11.500 8.500l5-3" stroke="#20b838" stroke-width="2.200" fill="none"/><path d="M18.500 4l-4.500-.3 2.300 3.800z" fill="#20b838"/><path d="M5 13v3" stroke="#20b838" stroke-width="1.800"/><path d="M5 18.500l-2.200-3h4.400z" fill="#20b838"/></svg>
<svg class="a" style="left:570.0px;top:48.5px" width="20" height="20" viewBox="0 0 20 20"><path d="M1.500 4q5-3.500 10-.5 1 4-1 7 2.500 2 2 5-5 3-8 0Q1 9 1.500 4z" fill="url(#chk)" stroke="#1a1a1a" stroke-width=".5"/><path d="M11.500 8.500l5-3" stroke="#20b838" stroke-width="2.200" fill="none"/><path d="M18.500 4l-4.500-.3 2.300 3.800z" fill="#20b838"/><path d="M5 13v3" stroke="#20b838" stroke-width="1.800"/><path d="M5 18.500l-2.200-3h4.400z" fill="#20b838"/></svg>
<svg class="a" style="left:590.5px;top:48.5px" width="20" height="20" viewBox="0 0 20 20"><path d="M1 7q0-5 9-5t9 5q0 4-4 7-2 3.500-5 4-3-.5-5-4-4-3-4-7z" fill="url(#chk)" stroke="#1a1a1a" stroke-width=".5"/><path d="M5.500 7h9M10 7v8" stroke="#20b838" stroke-width="2.200" fill="none"/><path d="M10 18.500l-2.500-3.500h5z" fill="#20b838"/></svg>
<svg class="a" style="left:611.5px;top:48.5px" width="20" height="20" viewBox="0 0 20 20"><rect x="2.500" y="2.500" width="15" height="15.500" fill="#f4f4f4" stroke="#fff" stroke-width=".5"/><rect x="2.500" y="2.500" width="15" height="2.200" fill="#5a9ae0"/><path d="M7 6.500l8-.5 1 10-8.500 1z" fill="url(#chks)"/><path d="M5 11.500h4M7 11.500V16" stroke="#20b838" stroke-width="1.500"/></svg>
<svg class="vp" style="position:absolute;left:26px;top:98px" width="578" height="257" viewBox="26 98 578 257">
<rect x="26" y="98" width="578" height="257" fill="#a3a3a3"/>
<polygon points="181.7,203.5 333.9,286.9 333.6,303.1 183.3,217.0" fill="#464646"/>
<polygon points="333.9,286.9 480.0,204.5 478.0,217.9 333.6,303.1" fill="#3c3c3c"/>
<line x1="323.1" y1="18.9" x2="-1118.8" y2="206.0" stroke="#808080" stroke-width="0.7"/>
<line x1="323.1" y1="18.9" x2="1831.7" y2="215.6" stroke="#808080" stroke-width="0.7"/>
<line x1="342.1" y1="21.4" x2="-1206.0" y2="234.8" stroke="#808080" stroke-width="0.7"/>
<line x1="304.3" y1="21.4" x2="1927.7" y2="246.1" stroke="#808080" stroke-width="0.7"/>
<line x1="362.4" y1="24.1" x2="-1313.9" y2="270.5" stroke="#808080" stroke-width="0.7"/>
<line x1="284.3" y1="24.0" x2="2047.3" y2="284.1" stroke="#808080" stroke-width="0.7"/>
<line x1="383.9" y1="26.9" x2="-1451.4" y2="315.9" stroke="#808080" stroke-width="0.7"/>
<line x1="263.0" y1="26.7" x2="2200.5" y2="332.7" stroke="#808080" stroke-width="0.7"/>
<line x1="406.9" y1="29.9" x2="-1632.1" y2="375.6" stroke="#808080" stroke-width="0.7"/>
<line x1="240.4" y1="29.7" x2="2403.5" y2="397.2" stroke="#808080" stroke-width="0.7"/>
<line x1="431.4" y1="33.1" x2="-1880.4" y2="457.6" stroke="#808080" stroke-width="0.7"/>
<line x1="216.2" y1="32.8" x2="2685.5" y2="486.7" stroke="#808080" stroke-width="0.7"/>
<line x1="457.7" y1="36.5" x2="-2243.0" y2="577.4" stroke="#808080" stroke-width="0.7"/>
<line x1="190.3" y1="36.2" x2="3103.9" y2="619.5" stroke="#808080" stroke-width="0.7"/>
<line x1="485.9" y1="40.2" x2="-2822.4" y2="768.8" stroke="#808080" stroke-width="0.7"/>
<line x1="162.5" y1="39.8" x2="3788.8" y2="836.9" stroke="#808080" stroke-width="0.7"/>
<line x1="516.4" y1="44.1" x2="-3895.9" y2="1123.4" stroke="#808080" stroke-width="0.7"/>
<line x1="132.6" y1="43.7" x2="5114.2" y2="1257.6" stroke="#808080" stroke-width="0.7"/>
<line x1="549.2" y1="48.4" x2="-6565.4" y2="2005.2" stroke="#808080" stroke-width="0.7"/>
<line x1="100.4" y1="47.8" x2="8767.1" y2="2417.1" stroke="#808080" stroke-width="0.7"/>
<line x1="584.8" y1="53.1" x2="-17727.0" y2="5805.2" stroke="#808080" stroke-width="0.7"/>
<line x1="65.6" y1="52.4" x2="18545.1" y2="5805.2" stroke="#808080" stroke-width="0.7"/>
<line x1="623.5" y1="58.1" x2="-15072.1" y2="5805.2" stroke="#808080" stroke-width="0.7"/>
<line x1="27.8" y1="57.3" x2="15929.8" y2="5805.2" stroke="#808080" stroke-width="0.7"/>
<line x1="712.0" y1="69.6" x2="-9762.4" y2="5805.2" stroke="#808080" stroke-width="0.7"/>
<line x1="-58.4" y1="68.4" x2="10699.2" y2="5805.2" stroke="#808080" stroke-width="0.7"/>
<line x1="762.8" y1="76.3" x2="-7107.6" y2="5805.2" stroke="#808080" stroke-width="0.7"/>
<line x1="-107.7" y1="74.8" x2="8083.9" y2="5805.2" stroke="#808080" stroke-width="0.7"/>
<line x1="819.1" y1="83.6" x2="-4452.8" y2="5805.2" stroke="#808080" stroke-width="0.7"/>
<line x1="-162.2" y1="81.9" x2="5468.7" y2="5805.2" stroke="#808080" stroke-width="0.7"/>
<line x1="881.5" y1="91.8" x2="-1797.9" y2="5805.2" stroke="#808080" stroke-width="0.7"/>
<line x1="-222.5" y1="89.7" x2="2853.4" y2="5805.2" stroke="#808080" stroke-width="0.7"/>
<line x1="951.4" y1="100.9" x2="856.9" y2="5805.2" stroke="#808080" stroke-width="0.7"/>
<line x1="-289.8" y1="98.5" x2="238.1" y2="5805.2" stroke="#808080" stroke-width="0.7"/>
<line x1="1029.9" y1="111.1" x2="3511.7" y2="5805.2" stroke="#808080" stroke-width="0.7"/>
<line x1="-365.1" y1="108.2" x2="-2377.2" y2="5805.2" stroke="#808080" stroke-width="0.7"/>
<line x1="1119.0" y1="122.7" x2="6166.6" y2="5805.2" stroke="#808080" stroke-width="0.7"/>
<line x1="-450.2" y1="119.3" x2="-4992.5" y2="5805.2" stroke="#808080" stroke-width="0.7"/>
<line x1="1220.7" y1="136.0" x2="8821.4" y2="5805.2" stroke="#808080" stroke-width="0.7"/>
<line x1="-547.1" y1="131.8" x2="-7607.8" y2="5805.2" stroke="#808080" stroke-width="0.7"/>
<line x1="1338.2" y1="151.3" x2="11476.2" y2="5805.2" stroke="#808080" stroke-width="0.7"/>
<line x1="-658.2" y1="146.3" x2="-10223.1" y2="5805.2" stroke="#808080" stroke-width="0.7"/>
<line x1="1475.2" y1="169.2" x2="14131.1" y2="5805.2" stroke="#808080" stroke-width="0.7"/>
<line x1="-787.2" y1="163.0" x2="-12838.3" y2="5805.2" stroke="#808080" stroke-width="0.7"/>
<line x1="1637.2" y1="190.3" x2="16785.9" y2="5805.2" stroke="#808080" stroke-width="0.7"/>
<line x1="-938.6" y1="182.6" x2="-15453.6" y2="5805.2" stroke="#808080" stroke-width="0.7"/>
<line x1="1831.7" y1="215.6" x2="19440.7" y2="5805.2" stroke="#808080" stroke-width="0.7"/>
<line x1="-1118.8" y1="206.0" x2="-18068.9" y2="5805.2" stroke="#808080" stroke-width="0.7"/>
<line x1="665.7" y1="63.6" x2="-12417.3" y2="5805.2" stroke="#0a0a0a" stroke-width="1.15"/>
<line x1="-13.4" y1="62.6" x2="13314.5" y2="5805.2" stroke="#0a0a0a" stroke-width="1.15"/>
<polygon points="181.7,203.5 333.9,286.9 480.0,204.5 328.5,152.9" fill="#4e4e4e" stroke="#4e4e4e" stroke-width=".5"/>
<polygon points="181.7,203.5 333.9,286.9 333.7,295.0 182.5,210.3" fill="#464646"/>
<polygon points="333.9,286.9 480.0,204.5 479.0,211.2 333.7,295.0" fill="#3c3c3c"/>
<polygon points="181.7,203.5 333.9,286.9 480.0,204.5 328.5,152.9" fill="none" stroke="#45c896" stroke-width="0.9" stroke-linejoin="round"/>
<polygon points="181.7,203.5 333.9,286.9 333.6,303.1 183.3,217.0" fill="none" stroke="#45c896" stroke-width="0.9" stroke-linejoin="round"/>
<polygon points="333.9,286.9 480.0,204.5 478.0,217.9 333.6,303.1" fill="none" stroke="#45c896" stroke-width="0.9" stroke-linejoin="round"/>
<line x1="330.700" y1="211" x2="330.900" y2="163" stroke="#7a7a7a" stroke-width="0.9"/>
<line x1="330.700" y1="211" x2="292.500" y2="227.700" stroke="#707070" stroke-width="0.9"/>
<line x1="330.700" y1="211" x2="370.300" y2="228" stroke="#707070" stroke-width="0.9"/>
<g transform="translate(331,162)"><polygon points="0,-4.4 4.4,-2.4200000000000004 0,-0.44000000000000006 -4.4,-2.4200000000000004" fill="#dcd438"/><polygon points="-4.4,-2.4200000000000004 0,-0.44000000000000006 0,4.4 -4.4,2.4200000000000004" fill="#c4bc20"/><polygon points="4.4,-2.4200000000000004 0,-0.44000000000000006 0,4.4 4.4,2.4200000000000004" fill="#a8a018"/></g>
<g transform="translate(330.7,211)"><polygon points="0,-4 4,-2.2 0,-0.4 -4,-2.2" fill="#62a4c0"/><polygon points="-4,-2.2 0,-0.4 0,4 -4,2.2" fill="#4a8ca8"/><polygon points="4,-2.2 0,-0.4 0,4 4,2.2" fill="#3f7c98"/></g>
<g transform="translate(292.3,227.8)"><polygon points="0,-4.2 4.2,-2.3100000000000005 0,-0.42000000000000004 -4.2,-2.3100000000000005" fill="#3434b0"/><polygon points="-4.2,-2.3100000000000005 0,-0.42000000000000004 0,4.2 -4.2,2.3100000000000005" fill="#28289c"/><polygon points="4.2,-2.3100000000000005 0,-0.42000000000000004 0,4.2 4.2,2.3100000000000005" fill="#202088"/></g>
<g transform="translate(370.3,228)"><polygon points="0,-4.2 4.2,-2.3100000000000005 0,-0.42000000000000004 -4.2,-2.3100000000000005" fill="#a83434"/><polygon points="-4.2,-2.3100000000000005 0,-0.42000000000000004 0,4.2 -4.2,2.3100000000000005" fill="#962828"/><polygon points="4.2,-2.3100000000000005 0,-0.42000000000000004 0,4.2 4.2,2.3100000000000005" fill="#802020"/></g>
<text x="301.800" y="348.900" font-family="Liberation Sans, sans-serif" font-weight="bold" font-size="7.400" fill="#165424" letter-spacing="0.35">persp</text>
<g stroke-width="1" fill="none"><line x1="41" y1="339" x2="41.5" y2="331" stroke="#10e010"/><line x1="41" y1="339" x2="46" y2="340" stroke="#e02020"/><line x1="41" y1="339" x2="36.5" y2="339.5" stroke="#2020e0"/></g>
<g font-family="Liberation Sans, sans-serif" font-size="7" font-weight="bold"><text x="40" y="330.5" fill="#10e810">Y</text><text x="45.5" y="342" fill="#f81818">X</text><text x="32.5" y="341.5" fill="#1818f8">Z</text></g>
</svg>
<div class="a" style="left:0;top:72px;width:26px;height:284px;background:#444"></div>
<div class="hgrip" style="left:3px;top:78px;width:19px"></div>
<div class="a" style="left:3px;top:82px;width:19px;height:19.500px;background:linear-gradient(#4e4e4e,#444);box-shadow:0 0 0 .8px #2c2c2c, inset 0 .6px 0 #5a5a5a;border-radius:1px"></div>
<div class="a" style="left:3px;top:103.5px;width:19px;height:19.500px;background:linear-gradient(#4e4e4e,#444);box-shadow:0 0 0 .8px #2c2c2c, inset 0 .6px 0 #5a5a5a;border-radius:1px"></div>
<div class="a" style="left:3px;top:125px;width:19px;height:19.500px;background:linear-gradient(#4e4e4e,#444);box-shadow:0 0 0 .8px #2c2c2c, inset 0 .6px 0 #5a5a5a;border-radius:1px"></div>
<div class="a" style="left:3px;top:146.5px;width:19px;height:19.500px;background:linear-gradient(#4e4e4e,#444);box-shadow:0 0 0 .8px #2c2c2c, inset 0 .6px 0 #5a5a5a;border-radius:1px"></div>
<div class="a" style="left:3px;top:168px;width:19px;height:19.500px;background:linear-gradient(#4e4e4e,#444);box-shadow:0 0 0 .8px #2c2c2c, inset 0 .6px 0 #5a5a5a;border-radius:1px"></div>
<div class="a" style="left:3px;top:189.5px;width:19px;height:19.500px;background:linear-gradient(#c6c6c6,#acacac);box-shadow:0 0 0 .8px #2c2c2c;border-radius:1px"></div>
<div class="a" style="left:3px;top:211px;width:19px;height:19.500px;background:linear-gradient(#4e4e4e,#444);box-shadow:0 0 0 .8px #2c2c2c, inset 0 .6px 0 #5a5a5a;border-radius:1px"></div>
<div class="a" style="left:3px;top:232.5px;width:19px;height:19.500px;background:linear-gradient(#4e4e4e,#444);box-shadow:0 0 0 .8px #2c2c2c, inset 0 .6px 0 #5a5a5a;border-radius:1px"></div>
<div class="a" style="left:3px;top:254px;width:19px;height:19.500px;background:linear-gradient(#4e4e4e,#444);box-shadow:0 0 0 .8px #2c2c2c, inset 0 .6px 0 #5a5a5a;border-radius:1px"></div>
<div class="a" style="left:3px;top:275.5px;width:19px;height:19.500px;background:linear-gradient(#4e4e4e,#444);box-shadow:0 0 0 .8px #2c2c2c, inset 0 .6px 0 #5a5a5a;border-radius:1px"></div>
<svg class="a" style="left:3px;top:82px" width="19" height="19.500" viewBox="0 0 19 19.500"><path transform="translate(6,4.5) scale(1.05)" d="M0 0l7.500 5.200-3 .5 1.900 3.600-1.700.9-1.900-3.600-2.300 2z" fill="#a81414" stroke="#e8dcdc" stroke-width=".8" stroke-linejoin="round"/></svg>
<svg class="a" style="left:3px;top:103.5px" width="19" height="19.500" viewBox="0 0 19 19.500"><path d="M7.500 2.500q5-.5 5.500 3 .3 2.500-1.500 4.500-1 3.500-4 5.500-3.500 1-4.500-2-.5-2.500.8-5-1-3 .7-4.800 1-1 3-1.200z" fill="none" stroke="#b8b8b8" stroke-width=".9" stroke-dasharray="2.200 1.300"/><path transform="translate(9.5,8.5) scale(0.95)" d="M0 0l7.500 5.200-3 .5 1.900 3.600-1.700.9-1.900-3.600-2.300 2z" fill="#a81414" stroke="#e8dcdc" stroke-width=".8" stroke-linejoin="round"/></svg>
<svg class="a" style="left:3px;top:125px" width="19" height="19.500" viewBox="0 0 19 19.500"><ellipse cx="8.500" cy="13" rx="6" ry="3.600" fill="none" stroke="#e02020" stroke-width="1.300"/><ellipse cx="7" cy="12" rx="3.800" ry="2.300" fill="#e8d468" stroke="#2a2a18" stroke-width=".6"/><circle cx="5.300" cy="11.600" r=".8" fill="#1a1a1a"/><circle cx="7.300" cy="12.900" r=".8" fill="#1a1a1a"/><circle cx="8.600" cy="11.300" r=".7" fill="#1a1a1a"/><path d="M9 11l7-7.500" stroke="#d8a860" stroke-width="1.600"/><path d="M9 11l2-2" stroke="#222" stroke-width="1.800"/></svg>
<svg class="a" style="left:3px;top:146.5px" width="19" height="19.500" viewBox="0 0 19 19.500"><path d="M11.500 5.500L7 15q4.500 3 9 0z" fill="#49a0e8" stroke="#1c5a9a" stroke-width=".4"/><path d="M8 2.500L3 12l4 2.500 4.500-9z" fill="#8a8a8a" opacity=".8"/><path d="M8 2.500L5.500 13" stroke="#c8c8c8" stroke-width=".6"/><path d="M2.500 13.500l8 3.500M10.500 17l-3-.3M10.500 17l-1.200-2.400" stroke="#e02020" stroke-width="1.500" fill="none"/></svg>
<svg class="a" style="left:3px;top:168px" width="19" height="19.500" viewBox="0 0 19 19.500"><circle cx="9.500" cy="7.500" r="5.200" fill="url(#bs)"/><path d="M3.200 10.500q.5 5.500 6.300 5.800 5.800-.3 6.300-5.800" fill="none" stroke="#e02020" stroke-width="1.700"/><path d="M1.300 11.800l2-3.800 2.200 3.600z" fill="#e02020"/><path d="M17.700 11.800l-2-3.800-2.200 3.600z" fill="#e02020"/></svg>
<svg class="a" style="left:3px;top:189.5px" width="19" height="19.500" viewBox="0 0 19 19.500"><path d="M2 2l4.500 1-3.500 3.500zM17 2l-4.500 1 3.500 3.500zM2 17.500l4.500-1-3.500-3.500zM17 17.500l-4.500-1 3.500-3.500z" fill="#d82020"/><path d="M3.500 3.500l4 4M15.500 3.500l-4 4M3.500 16l4-4M15.500 16l-4-4" stroke="#d82020" stroke-width="1.600"/><path d="M5 7.300l4.500-2 4.500 2v5.400l-4.500 2-4.500-2z" fill="#4aa0e4" stroke="#d8ecfa" stroke-width=".4"/><path d="M5 7.300l4.500 2 4.500-2-4.500-2z" fill="#a0d4fa"/><path d="M9.500 9.300v5.400l4.500-2V7.300z" fill="#2a78c0"/></svg>
<svg class="a" style="left:3px;top:211px" width="19" height="19.500" viewBox="0 0 19 19.500"><path d="M3 6.500l5-2.500 8 1.500v9l-5 2.500-8-1.500z M3 6.500l8 1.500 5-2.500M11 8v9" fill="none" stroke="#e0e0e0" stroke-width=".7"/><circle cx="9.500" cy="11" r="2.400" fill="url(#bs)"/><path d="M9.500 11V4" stroke="#20c030" stroke-width="1"/><path d="M9.500 11l-5 3" stroke="#2040e0" stroke-width="1"/><path d="M9.500 11l5.500 2.500" stroke="#e02020" stroke-width="1"/><g fill="#f0e040"><circle cx="3" cy="6.500" r=".9"/><circle cx="16" cy="5.500" r=".9"/><circle cx="3" cy="15.500" r=".9"/><circle cx="16" cy="14.500" r=".9"/><circle cx="11" cy="17" r=".9"/><circle cx="8" cy="4" r=".9"/></g></svg>
<svg class="a" style="left:3px;top:232.5px" width="19" height="19.500" viewBox="0 0 19 19.500"><path d="M3 14.500l4-4.500h6l3.500 4.500-4.500 3z" fill="#7ec0ec" stroke="#d8ecfa" stroke-width=".5"/><path d="M5 12h9M7 10l-1 6.500M10 10v7.500M13 10l1 5.500" stroke="#2a78c0" stroke-width=".5"/><path d="M9.500 11V4.500" stroke="#e02020" stroke-width="1.100"/><path d="M9.500 2l1.600 3h-3.200z" fill="#e02020"/></svg>
<svg class="a" style="left:3px;top:254px" width="19" height="19.500" viewBox="0 0 19 19.500"><path d="M9.500 10.500V4" stroke="#20c030" stroke-width="1.200"/><path d="M9.500 1.500l1.800 3.200H7.700z" fill="#20c030"/><path d="M9.500 10.500l-5-1.500" stroke="#2040e0" stroke-width="1.200"/><path d="M2 8.200l3.300-.6-.8 2.800z" fill="#2040e0"/><path d="M9.500 10.500l5 3.500" stroke="#e02020" stroke-width="1.200"/><path d="M16.500 15.500l-3.200-.3 1.500-2.300z" fill="#e02020"/><path d="M7 8.500h5v4H7z" fill="#7ec0ec" stroke="#d8ecfa" stroke-width=".5"/><circle cx="13" cy="10" r="1.100" fill="#f0f0f0"/></svg>
<div class="a" style="left:3px;top:303px;width:19px;height:18.500px;background:linear-gradient(#ececec,#c2c2c2);box-shadow:0 0 0 .8px #2c2c2c;border-radius:1px"></div>
<svg class="a" style="left:3px;top:303px" width="19" height="18.500" viewBox="0 0 19 18.500"><path d="M2.500 8l7-3.800 7 3.800-7 4zM6 6.100l7 3.900M13 6.100L6 10" fill="none" stroke="#222" stroke-width="1.150"/><path d="M3.500 15.500V12" stroke="#20c030" stroke-width=".9"/><path d="M3.500 15.500l3 1" stroke="#e02020" stroke-width=".9"/><path d="M3.500 15.500l-2 1.200" stroke="#2040e0" stroke-width=".9"/></svg>
<div class="a" style="left:3px;top:325px;width:9px;height:6.500px;background:#d8d8d8;box-shadow:0 0 0 .7px #2c2c2c"></div>
<div class="a" style="left:13px;top:325px;width:9px;height:6.500px;background:#d8d8d8;box-shadow:0 0 0 .7px #2c2c2c"></div>
<svg class="a" style="left:3px;top:325px" width="19" height="7"><path d="M4.500 1.500v5M2 4.500h5" stroke="#333" stroke-width=".9"/><path d="M1 6h7" stroke="#333" stroke-width=".7"/><ellipse cx="14.500" cy="3.800" rx="3" ry="1.800" fill="none" stroke="#333" stroke-width=".7"/><path d="M12 2l5 3.500M17 2l-5 3.500" stroke="#333" stroke-width=".5"/></svg>
<div class="a" style="left:3.500px;top:334px;width:18px;height:17px;background:linear-gradient(#3e3e3e,#2e2e2e);box-shadow:0 0 0 .8px #222;border-radius:3px"></div>
<svg class="a" style="left:3.500px;top:334px" width="18" height="17" viewBox="0 0 18 17"><path d="M7 2q-3.500 4.500-2 9.500 1.500 3 4.500 3-2.500-2-2-5 .3-2 2-3.500M7 2q4 1 5.500 5 1 4-1 7.500M7.500 5q2.500 2 3 5 0 2-1.500 3.500M6 9q1.500-1 3 0 1 1.500 0 3" fill="none" stroke="#d8d8d8" stroke-width=".9" stroke-linecap="round"/></svg>
<div class="a" style="left:0;top:72px;width:740px;height:1px;background:#363636"></div>
<div class="a" style="left:26px;top:75.400px;width:578px;height:23px;background:#3c3c3c"></div>
<div class="a" style="left:25.500px;top:74.500px;width:1.300px;height:281px;background:#303030"></div>
<div class="a" style="left:26.800px;top:74.500px;width:577px;height:1px;background:#5e5e5e"></div>
<div class="t" style="left:31px;top:75.500px">View</div>
<div class="t" style="left:52.5px;top:75.500px">Shading</div>
<div class="t" style="left:82.5px;top:75.500px">Lighting</div>
<div class="t" style="left:113px;top:75.500px">Show</div>
<div class="t" style="left:136px;top:75.500px">Renderer</div>
<div class="t" style="left:171px;top:75.500px">Panels</div>
<div class="a" style="left:603.100px;top:98px;width:1.200px;height:258px;background:#2e2e2e"></div>
<div class="a" style="left:603.100px;top:74.500px;width:1.100px;height:23.500px;background:#606060"></div>
<div class="a" style="left:26px;top:354.500px;width:578px;height:2.500px;background:#363636"></div>
<div class="sep" style="left:94px;top:88.500px;height:8px;background:#2c2c2c;border-right-color:#555"></div>
<div class="sep" style="left:181px;top:88.500px;height:8px;background:#2c2c2c;border-right-color:#555"></div>
<div class="sep" style="left:269px;top:88.500px;height:8px;background:#2c2c2c;border-right-color:#555"></div>
<div class="sep" style="left:285.5px;top:88.500px;height:8px;background:#2c2c2c;border-right-color:#555"></div>
<div class="sep" style="left:29.500px;top:88.500px;height:8px;background:#2c2c2c;border-right-color:#555"></div>
<svg class="a" style="left:34.3px;top:88px;opacity:.92" width="9.200000000000001" height="9.200000000000001" viewBox="0 0 10 10"><circle cx="3.200" cy="3.200" r="2.300" fill="#222" stroke="#ddd" stroke-width=".7"/><circle cx="7" cy="3.200" r="2.300" fill="#222" stroke="#ddd" stroke-width=".7"/><path d="M2 6h6v3H2z" fill="#1a1a1a" stroke="#ccc" stroke-width=".5"/></svg>
<svg class="a" style="left:45.8px;top:88px;opacity:.92" width="9.200000000000001" height="9.200000000000001" viewBox="0 0 10 10"><circle cx="2.800" cy="2.800" r="1.800" fill="#222" stroke="#ddd" stroke-width=".6"/><circle cx="5.800" cy="2.800" r="1.800" fill="#222" stroke="#ddd" stroke-width=".6"/><path d="M1.500 5h5v3.500h-5z" fill="#1a1a1a" stroke="#ccc" stroke-width=".5"/><path d="M7.500 4v5.500M9.200 4v5.500" stroke="#eee" stroke-width="1"/></svg>
<svg class="a" style="left:57.3px;top:88px;opacity:.92" width="9.200000000000001" height="9.200000000000001" viewBox="0 0 10 10"><rect x=".5" y="1.500" width="4" height="8" fill="#f4f4f4"/><rect x="5.500" y="1.500" width="4" height="8" fill="#f4f4f4"/><rect x="5.800" y=".3" width="1.800" height="7" fill="#20b030"/><path d="M2.500 2.500v6" stroke="#999" stroke-width=".6"/></svg>
<svg class="a" style="left:68.8px;top:88px;opacity:.92" width="9.200000000000001" height="9.200000000000001" viewBox="0 0 10 10"><path d="M.5 6.500l5.500-4.500 4 2.500-5 4.500z" fill="#58c048" stroke="#d0d0d0" stroke-width=".7"/><path d="M3 6l3.200-2.600 2.200 1.300-3.200 2.800z" fill="#4a78e0"/><path d="M.5 8l4.500 2.300 5-4" fill="none" stroke="#b8b8b8" stroke-width=".9"/></svg>
<svg class="a" style="left:80.8px;top:88px;opacity:.92" width="9.200000000000001" height="9.200000000000001" viewBox="0 0 10 10"><path d="M1.500 9l4-5" stroke="#d8a860" stroke-width="1.200"/><path d="M3.500 1v5M1 3.500h5" stroke="#e02020" stroke-width="1.200"/><circle cx="7.500" cy="4.500" r="1.800" fill="#e8e8e8" stroke="#e02020" stroke-width=".5"/></svg>
<div class="a" style="left:97.500px;top:87px;width:10.500px;height:10.500px;background:#5a6672;border-radius:1.500px;box-shadow:0 0 0 .5px #2a2a2a"></div>
<svg class="a" style="left:98.3px;top:88px;opacity:.92" width="9.200000000000001" height="9.200000000000001" viewBox="0 0 10 10"><path d="M1 3.500h8l-1 5H2z" fill="#7ea8c8" stroke="#cfe4f4" stroke-width=".5"/><path d="M1.500 5h7M2 6.800h6M3.500 3.500l.5 5M6.500 3.500l-.5 5" stroke="#3a6a90" stroke-width=".5"/><ellipse cx="5" cy="3" rx="3.500" ry="1.500" fill="none" stroke="#cfe4f4" stroke-width=".5"/></svg>
<svg class="a" style="left:109.8px;top:88px;opacity:.92" width="9.200000000000001" height="9.200000000000001" viewBox="0 0 10 10"><rect x=".5" y="2" width="9" height="6.500" fill="#e8e8e8" stroke="#fff" stroke-width=".4"/><rect x="1.500" y="3.500" width="7" height="3.500" fill="#3a68a8"/><path d="M3 3.500v3.500M5 3.500v3.500M7 3.500v3.500" stroke="#e8e8e8" stroke-width=".5"/></svg>
<svg class="a" style="left:121.8px;top:88px;opacity:.92" width="9.200000000000001" height="9.200000000000001" viewBox="0 0 10 10"><rect x=".5" y="1.500" width="9" height="7.500" fill="#f0f0f0"/><circle cx="5" cy="5.200" r="3.200" fill="url(#bs)"/></svg>
<svg class="a" style="left:133.3px;top:88px;opacity:.92" width="9.200000000000001" height="9.200000000000001" viewBox="0 0 10 10"><rect x=".3" y="1" width="9.400" height="8.500" fill="#c4c4c4"/><circle cx="5" cy="5.200" r="2.800" fill="#dcdcdc" stroke="#a0a0a0" stroke-width=".6"/></svg>
<svg class="a" style="left:144.8px;top:88px;opacity:.92" width="9.200000000000001" height="9.200000000000001" viewBox="0 0 10 10"><rect x=".8" y="1.500" width="8.400" height="7.500" rx="2.500" fill="#2a2a2a" stroke="#e8e8e8" stroke-width=".9"/><path d="M1.500 2.500l7 5.500M8.500 2.500l-7 5.500" stroke="#e8e8e8" stroke-width=".8"/></svg>
<svg class="a" style="left:156.3px;top:88px;opacity:.92" width="9.200000000000001" height="9.200000000000001" viewBox="0 0 10 10"><rect x=".5" y="1.500" width="9" height="7.500" fill="#f0f0f0" stroke="#2c9040" stroke-width=".8"/><path d="M2.500 3.500l5 3.500M7.500 3.500l-5 3.500" stroke="#2050c0" stroke-width="1"/><circle cx="5" cy="5.200" r="1" fill="#2050c0"/></svg>
<svg class="a" style="left:166.8px;top:88px;opacity:.92" width="9.200000000000001" height="9.200000000000001" viewBox="0 0 10 10"><rect x=".5" y="1.500" width="9" height="7.500" fill="#f4f4f4" stroke="#2c9040" stroke-width=".8"/><path d="M2.800 3.500h4.400M5 3.500v4.500" stroke="#111" stroke-width="1.300"/></svg>
<svg class="a" style="left:186.3px;top:88px;opacity:.92" width="9.200000000000001" height="9.200000000000001" viewBox="0 0 10 10"><path d="M1 3l4-2 4 1.200v5.300l-4 2-4-1.200z" fill="#3c3c3c" stroke="#e0e0e0" stroke-width=".6"/><path d="M1 3l4-2 4 1.200-4 2z" fill="#3c3c3c" stroke="#e0e0e0" stroke-width=".5"/><path d="M5 4.200v5.300l4-2V2.200z" fill="#3c3c3c" stroke="#e0e0e0" stroke-width=".5"/></svg>
<div class="a" style="left:196.500px;top:87px;width:11px;height:10.500px;background:#545e68;border-radius:1.500px;box-shadow:0 0 0 .5px #2a2a2a"></div>
<svg class="a" style="left:197.8px;top:88px;opacity:.92" width="9.200000000000001" height="9.200000000000001" viewBox="0 0 10 10"><path d="M1 3l4-2 4 1.200v5.300l-4 2-4-1.200z" fill="#5aa4e8" stroke="#2f78c8" stroke-width=".6"/><path d="M1 3l4-2 4 1.200-4 2z" fill="#9fd0f8" stroke="#2f78c8" stroke-width=".5"/><path d="M5 4.200v5.300l4-2V2.200z" fill="#2f78c8" stroke="#2f78c8" stroke-width=".5"/></svg>
<svg class="a" style="left:209.3px;top:88px;opacity:.92" width="9.200000000000001" height="9.200000000000001" viewBox="0 0 10 10"><path d="M1 3l4-2 4 1.200v5.300l-4 2-4-1.200z" fill="#5aa4e8" stroke="#f0f0f0" stroke-width=".6"/><path d="M1 3l4-2 4 1.200-4 2z" fill="#9fd0f8" stroke="#f0f0f0" stroke-width=".5"/><path d="M5 4.200v5.300l4-2V2.200z" fill="#2f78c8" stroke="#f0f0f0" stroke-width=".5"/></svg>
<svg class="a" style="left:220.3px;top:88px;opacity:.92" width="9.200000000000001" height="9.200000000000001" viewBox="0 0 10 10"><circle cx="5" cy="5" r="4.300" fill="url(#chks)" stroke="#222" stroke-width=".4"/></svg>
<svg class="a" style="left:231.3px;top:88px;opacity:.92" width="9.200000000000001" height="9.200000000000001" viewBox="0 0 10 10"><circle cx="5" cy="5" r="4" fill="url(#ys)"/></svg>
<svg class="a" style="left:243.3px;top:88px;opacity:.92" width="9.200000000000001" height="9.200000000000001" viewBox="0 0 10 10"><circle cx="5" cy="5" r="4" fill="url(#grs)"/></svg>
<svg class="a" style="left:255.3px;top:88px;opacity:.92" width="9.200000000000001" height="9.200000000000001" viewBox="0 0 10 10"><circle cx="5" cy="5" r="4.200" fill="url(#gos)"/></svg>
<svg class="a" style="left:273.8px;top:88px;opacity:.92" width="9.200000000000001" height="9.200000000000001" viewBox="0 0 10 10"><rect x=".8" y=".8" width="6.500" height="6" fill="#3c3c3c" stroke="#30a040" stroke-width=".9"/><path d="M4 3.500l4.500 2.600-1.600.4 1 1.900-.9.500-1-1.900-1.200 1z" fill="#d02020" stroke="#f4f4f4" stroke-width=".5"/></svg>
<svg class="a" style="left:290.3px;top:88px;opacity:.92" width="9.200000000000001" height="9.200000000000001" viewBox="0 0 10 10"><path d="M1 3l4-2 4 1.200v5.300l-4 2-4-1.200z" fill="#2a2a2a" stroke="#e8e8e8" stroke-width=".6"/><path d="M1 3l4-2 4 1.200-4 2z" fill="#2a2a2a" stroke="#e8e8e8" stroke-width=".5"/><path d="M5 4.200v5.300l4-2V2.200z" fill="#2a2a2a" stroke="#e8e8e8" stroke-width=".5"/></svg>
<svg class="a" style="left:301.8px;top:88px;opacity:.92" width="9.200000000000001" height="9.200000000000001" viewBox="0 0 10 10"><rect x="1" y="3" width="6" height="6" rx="1" fill="#2a2a2a" stroke="#aaa" stroke-width=".7"/><rect x="3.500" y="1" width="5.500" height="5.500" rx="1" fill="none" stroke="#aaa" stroke-width=".7"/></svg>
<svg class="a" style="left:313.3px;top:88px;opacity:.92" width="9.200000000000001" height="9.200000000000001" viewBox="0 0 10 10"><rect x=".3" y=".8" width="9.400" height="9" rx="1.500" fill="#1c1c1c"/><path d="M3 5l4.500-2.500M3 5l4.500 2.800" stroke="#f0f0f0" stroke-width=".8"/><circle cx="2.800" cy="5" r="1.400" fill="#f0f0f0"/><circle cx="7.500" cy="2.500" r="1.400" fill="#f0f0f0"/><circle cx="7.500" cy="7.800" r="1.400" fill="#f0f0f0"/></svg>
<div class="a" style="left:604.200px;top:73px;width:136px;height:283px;background:#444"></div>
<div class="hgrip" style="left:609.500px;top:78.500px;width:16px"></div>
<div class="hgrip" style="left:705px;top:78.500px;width:17px"></div>
<div class="t" style="left:633px;top:75px;color:#d0d0d0;transform:scaleX(.752)">Channel Box / Layer Editor</div>
<svg class="a" style="left:724px;top:76.500px" width="15" height="7" viewBox="0 0 15 7"><rect x=".3" y=".3" width="6.400" height="6.200" fill="#2a2a2a" stroke="#888" stroke-width=".5"/><path d="M2.800 1.800h2.600v2.400M1.600 3h2.600v2.400H1.600z" fill="none" stroke="#e8e8e8" stroke-width=".7"/><rect x="7.800" y=".3" width="6.400" height="6.200" fill="#2a2a2a" stroke="#888" stroke-width=".5"/><path d="M9.300 1.600l3.600 3.600M12.900 1.600L9.300 5.200" stroke="#f0f0f0" stroke-width=".9"/></svg>
<svg class="a" style="left:705px;top:86px" width="34" height="11" viewBox="0 0 34 11"><path d="M4.500 6.500V1.500" stroke="#20c030" stroke-width="1.100"/><path d="M4.500 0l1.500 2.500h-3z" fill="#20c030"/><path d="M4.500 6.500l-3.500 2" stroke="#2040e0" stroke-width="1.200"/><path d="M4.500 6.500l3.500 2.500" stroke="#e02020" stroke-width="1.200"/><circle cx="4.500" cy="6.500" r="1.300" fill="#d8d8d8"/><circle cx="16" cy="5.500" r="4.300" fill="#3a3a3a" stroke="#c8c8c8" stroke-width=".9"/><path d="M16 1.500v4l0 4a4 4 0 0 0 0-8z" fill="#a8a8a8"/><path d="M16 2v3.500" stroke="#e8e8e8" stroke-width=".7"/><path d="M24.500 10l7-7.500" stroke="#a8a8a8" stroke-width="1.100"/><path d="M32.500 1l-.8 3.300-2.400-2.300z" fill="#a8a8a8"/></svg>
<div class="t" style="left:613px;top:98.800px">Channels</div>
<div class="t" style="left:646.5px;top:98.800px">Edit</div>
<div class="t" style="left:666px;top:98.800px">Object</div>
<div class="t" style="left:693px;top:98.800px">Show</div>
<div class="a" style="left:609px;top:112px;width:127px;height:136px;background:#3f3f3f;box-shadow:0 0 0 .8px #5a5a5a"></div>
<div class="t b" style="left:611.500px;top:112.500px;color:#e0e0e0">pCube1</div>
<div class="f" style="left:689.500px;top:122.6px;width:37px;height:7.800px;border-radius:0"></div>
<div class="t r" style="left:618px;width:70px;top:121.3px;color:#d0d0d0">Translate X</div>
<div class="t" style="left:690.200px;top:121.3px;color:#d8d8d8">0</div>
<div class="f" style="left:689.500px;top:131.9px;width:37px;height:7.800px;border-radius:0"></div>
<div class="t r" style="left:618px;width:70px;top:130.6px;color:#d0d0d0">Translate Y</div>
<div class="t" style="left:690.200px;top:130.6px;color:#d8d8d8">0</div>
<div class="f" style="left:689.500px;top:141.2px;width:37px;height:7.800px;border-radius:0"></div>
<div class="t r" style="left:618px;width:70px;top:139.9px;color:#d0d0d0">Translate Z</div>
<div class="t" style="left:690.200px;top:139.9px;color:#d8d8d8">0</div>
<div class="f" style="left:689.500px;top:150.5px;width:37px;height:7.800px;border-radius:0"></div>
<div class="t r" style="left:618px;width:70px;top:149.2px;color:#d0d0d0">Rotate X</div>
<div class="t" style="left:690.200px;top:149.2px;color:#d8d8d8">0</div>
<div class="f" style="left:689.500px;top:159.8px;width:37px;height:7.800px;border-radius:0"></div>
<div class="t r" style="left:618px;width:70px;top:158.5px;color:#d0d0d0">Rotate Y</div>
<div class="t" style="left:690.200px;top:158.5px;color:#d8d8d8">0</div>
<div class="f" style="left:689.500px;top:169.1px;width:37px;height:7.800px;border-radius:0"></div>
<div class="t r" style="left:618px;width:70px;top:167.8px;color:#d0d0d0">Rotate Z</div>
<div class="t" style="left:690.200px;top:167.8px;color:#d8d8d8">0</div>
<div class="f" style="left:689.500px;top:178.4px;width:37px;height:7.800px;border-radius:0"></div>
<div class="t r" style="left:618px;width:70px;top:177.1px;color:#d0d0d0">Scale X</div>
<div class="t" style="left:690.200px;top:177.1px;color:#d8d8d8">2.412</div>
<div class="f" style="left:689.500px;top:187.7px;width:37px;height:7.800px;border-radius:0"></div>
<div class="t r" style="left:618px;width:70px;top:186.4px;color:#d0d0d0">Scale Y</div>
<div class="t" style="left:690.200px;top:186.4px;color:#d8d8d8">0.172</div>
<div class="f" style="left:689.500px;top:197.0px;width:37px;height:7.800px;border-radius:0"></div>
<div class="t r" style="left:618px;width:70px;top:195.7px;color:#d0d0d0">Scale Z</div>
<div class="t" style="left:690.200px;top:195.7px;color:#d8d8d8">2.412</div>
<div class="f" style="left:689.500px;top:206.3px;width:37px;height:7.800px;border-radius:0"></div>
<div class="t r" style="left:618px;width:70px;top:205.0px;color:#d0d0d0">Visibility</div>
<div class="t" style="left:690.200px;top:205.0px;color:#d8d8d8">on</div>
<div class="a" style="left:609.500px;top:215px;width:118px;height:8.500px;background:#494949"></div>
<div class="t b" style="left:611.500px;top:214.300px;color:#e0e0e0">SHAPES</div>
<div class="a" style="left:609.500px;top:223.800px;width:118px;height:9px;background:#3f3f3f"></div>
<div class="t b" style="left:616.500px;top:223.300px;color:#e4e4e4">pCubeShape1</div>
<div class="a" style="left:609.500px;top:233.200px;width:118px;height:9px;background:#494949"></div>
<div class="t b" style="left:611.500px;top:232.600px;color:#e0e0e0">INPUTS</div>
<div class="a" style="left:609.500px;top:242.500px;width:118px;height:5.500px;overflow:hidden"><div class="t b" style="left:7px;top:-1px;color:#e4e4e4">polyCube1</div></div>
<div class="a" style="left:727.800px;top:112.500px;width:8px;height:135.500px;background:#3a3a3a"></div>
<div class="a" style="left:728.200px;top:121.500px;width:7.500px;height:98px;background:linear-gradient(90deg,#7a7a7a,#585858);border-radius:1px"></div>
<svg class="a" style="left:729.500px;top:163px" width="5" height="12"><g fill="#444"><rect x="0" y="0" width="1" height="1"/><rect x="2" y="0" width="1" height="1"/><rect x="4" y="0" width="1" height="1"/><rect x="0" y="2" width="1" height="1"/><rect x="2" y="2" width="1" height="1"/><rect x="4" y="2" width="1" height="1"/><rect x="0" y="4" width="1" height="1"/><rect x="2" y="4" width="1" height="1"/><rect x="4" y="4" width="1" height="1"/><rect x="0" y="6" width="1" height="1"/><rect x="2" y="6" width="1" height="1"/><rect x="4" y="6" width="1" height="1"/><rect x="0" y="8" width="1" height="1"/><rect x="2" y="8" width="1" height="1"/><rect x="4" y="8" width="1" height="1"/></g></svg>
<div class="a" style="left:728.300px;top:113.2px;width:7.500px;height:7.600px;background:linear-gradient(#707070,#585858);border-radius:1px;box-shadow:0 0 0 .5px #2e2e2e"></div>
<svg class="a" style="left:728.300px;top:113.2px" width="8" height="8"><polygon points="1.700,5 5.800,5 3.750,2.600" fill="#eee"/></svg>
<div class="a" style="left:728.300px;top:230px;width:7.500px;height:7.600px;background:linear-gradient(#707070,#585858);border-radius:1px;box-shadow:0 0 0 .5px #2e2e2e"></div>
<svg class="a" style="left:728.300px;top:230px" width="8" height="8"><polygon points="1.700,5 5.800,5 3.750,2.600" fill="#eee"/></svg>
<div class="a" style="left:728.300px;top:239.2px;width:7.500px;height:7.600px;background:linear-gradient(#707070,#585858);border-radius:1px;box-shadow:0 0 0 .5px #2e2e2e"></div>
<svg class="a" style="left:728.300px;top:239.2px" width="8" height="8"><polygon points="1.700,2.800 5.800,2.800 3.750,5.200" fill="#eee"/></svg>
<div class="a" style="left:652px;top:252px;width:42px;height:1.200px;background:repeating-linear-gradient(90deg,#6e6e6e 0 1.200px,transparent 1.200px 2.800px)"></div>
<div class="a" style="left:605.800px;top:166px;width:1.200px;height:88px;background:repeating-linear-gradient(#666 0 1.200px,transparent 1.200px 2.800px)"></div>
<div class="a" style="left:609.500px;top:267.600px;width:127px;height:87px;background:#444;box-shadow:0 0 0 .7px #333"></div>
<div class="a" style="left:609.500px;top:257.500px;width:33px;height:11px;background:linear-gradient(#6a6a6a,#595959);border-radius:2px 2px 0 0;box-shadow:0 0 0 .6px #2e2e2e"></div>
<div class="t c" style="left:609.500px;width:33px;top:258px;color:#e4e4e4">Display</div>
<div class="a" style="left:644.5px;top:259px;width:33.0px;height:9px;background:linear-gradient(#4c4c4c,#444);border-radius:2px 2px 0 0;box-shadow:0 0 0 .6px #323232"></div>
<div class="t c" style="left:644.5px;width:33.0px;top:258.500px">Render</div>
<div class="a" style="left:679px;top:259px;width:27px;height:9px;background:linear-gradient(#4c4c4c,#444);border-radius:2px 2px 0 0;box-shadow:0 0 0 .6px #323232"></div>
<div class="t c" style="left:679px;width:27px;top:258.500px">Anim</div>
<div class="t" style="left:614.5px;top:270px">Layers</div>
<div class="t" style="left:642px;top:270px">Options</div>
<div class="t" style="left:671.5px;top:270px">Help</div>
<svg class="a" style="left:679.5px;top:283.500px" width="12" height="11" viewBox="0 0 12 11"><path d="M3.500 3.500h7v6h-7z" fill="#d8d8d8" stroke="#888" stroke-width=".5"/><path d="M3.500 3.500l1-1.300h7l-1 1.300M10.500 9.500l1-1.300V2.200" fill="#f0f0f0" stroke="#888" stroke-width=".4"/><path d="M3.500 5.500h7M3.500 7.500h7" stroke="#555" stroke-width=".7"/><path d="M1.500 9.500V2.500M0 4l1.500-2L3 4" stroke="#e02020" stroke-width="1" fill="none"/></svg>
<svg class="a" style="left:693.5px;top:283.500px" width="12" height="11" viewBox="0 0 12 11"><path d="M3.500 3.500h7v6h-7z" fill="#d8d8d8" stroke="#888" stroke-width=".5"/><path d="M3.500 3.500l1-1.300h7l-1 1.300M10.500 9.500l1-1.300V2.200" fill="#f0f0f0" stroke="#888" stroke-width=".4"/><path d="M3.500 5.500h7M3.500 7.500h7" stroke="#555" stroke-width=".7"/><path d="M1.500 1.500v7M0 7l1.500 2L3 7" stroke="#e02020" stroke-width="1" fill="none"/></svg>
<svg class="a" style="left:709.5px;top:283.500px" width="12" height="11" viewBox="0 0 12 11"><path d="M.5 7.500l5-3 5 2-5 3.500z" fill="#f0f0f0" stroke="#aaa" stroke-width=".4"/><path d="M.5 7.500v1.300l5 2.200 5-3.500V6.500l-5 3.500z" fill="#c8c8c8"/><circle cx="9" cy="2.800" r="2" fill="#f0a020"/><path d="M9 0v5.600M6.300 2.800h5.400" stroke="#ffd060" stroke-width=".7"/></svg>
<svg class="a" style="left:723.5px;top:283.500px" width="12" height="11" viewBox="0 0 12 11"><path d="M.5 7.500l5-3 5 2-5 3.500z" fill="#f0f0f0" stroke="#aaa" stroke-width=".4"/><path d="M.5 7.500v1.300l5 2.200 5-3.500V6.500l-5 3.500z" fill="#c8c8c8"/><circle cx="4.500" cy="5.500" r="2.300" fill="url(#bs)"/><circle cx="9" cy="2.800" r="2" fill="#f0a020"/><path d="M9 0v5.600M6.300 2.800h5.400" stroke="#ffd060" stroke-width=".7"/></svg>
<div class="a" style="left:611px;top:297px;width:123px;height:44.500px;background:#2b2b2b"></div>
<div class="a" style="left:611px;top:341.500px;width:123px;height:9.500px;background:#353535"></div>
<div class="a" style="left:622px;top:342.500px;width:55.500px;height:7.500px;background:linear-gradient(#727272,#565656);border-radius:1px"></div>
<div class="a" style="left:644px;top:344px;width:10px;height:4.500px;background:repeating-linear-gradient(90deg,#444 0 .8px,transparent .8px 2px)"></div>
<div class="a" style="left:613px;top:342.500px;width:7.500px;height:7.500px;background:linear-gradient(#707070,#585858);border-radius:1px;box-shadow:0 0 0 .5px #2a2a2a"></div>
<svg class="a" style="left:613px;top:342.500px" width="8" height="8"><polygon points="4.800,1.700 4.800,5.800 2.400,3.750" fill="#eee"/></svg>
<div class="a" style="left:717px;top:342.500px;width:7.500px;height:7.500px;background:linear-gradient(#707070,#585858);border-radius:1px;box-shadow:0 0 0 .5px #2a2a2a"></div>
<svg class="a" style="left:717px;top:342.500px" width="8" height="8"><polygon points="4.800,1.700 4.800,5.800 2.400,3.750" fill="#eee"/></svg>
<div class="a" style="left:726px;top:342.500px;width:7.500px;height:7.500px;background:linear-gradient(#707070,#585858);border-radius:1px;box-shadow:0 0 0 .5px #2a2a2a"></div>
<svg class="a" style="left:726px;top:342.500px" width="8" height="8"><polygon points="2.800,1.700 2.800,5.800 5.200,3.750" fill="#eee"/></svg>
<div class="a" style="left:0;top:357px;width:740px;height:70px;background:#444"></div>
<div class="a" style="left:0;top:375.3px;width:740px;height:1.200px;background:#393939"></div>
<div class="a" style="left:0;top:392.9px;width:740px;height:1.200px;background:#393939"></div>
<div class="a" style="left:0;top:410.7px;width:740px;height:1.200px;background:#393939"></div>
<div class="grip" style="left:2.500px;top:358px;height:15px"></div>
<div class="a" style="left:7.500px;top:357.500px;width:558px;height:16.500px;background:#727272;box-shadow:0 0 0 .7px #333"></div>
<div class="a" style="left:7.500px;top:357.500px;width:25.800px;height:16.500px;background:linear-gradient(90deg,#8a8a8a 0 1.500px,#6c6c6c 2.500px)"></div>
<div class="t" style="left:16px;top:364px;color:#e8e8e8">1</div>
<div class="a" style="left:33.0px;top:365.500px;width:1.600px;height:8.500px;background:#0c0c0c"></div>
<div class="t" style="left:37.7px;top:355.800px;color:#0c0c0c;font-size:7px">2</div>
<div class="a" style="left:79.1px;top:365.500px;width:1.600px;height:8.500px;background:#0c0c0c"></div>
<div class="t" style="left:83.8px;top:355.800px;color:#0c0c0c;font-size:7px">4</div>
<div class="a" style="left:125.2px;top:365.500px;width:1.600px;height:8.500px;background:#0c0c0c"></div>
<div class="t" style="left:129.9px;top:355.800px;color:#0c0c0c;font-size:7px">6</div>
<div class="a" style="left:171.2px;top:365.500px;width:1.600px;height:8.500px;background:#0c0c0c"></div>
<div class="t" style="left:175.9px;top:355.800px;color:#0c0c0c;font-size:7px">8</div>
<div class="a" style="left:217.3px;top:365.500px;width:1.600px;height:8.500px;background:#0c0c0c"></div>
<div class="t" style="left:222.9px;top:355.800px;color:#0c0c0c;font-size:7px">10</div>
<div class="a" style="left:263.4px;top:365.500px;width:1.600px;height:8.500px;background:#0c0c0c"></div>
<div class="t" style="left:269.0px;top:355.800px;color:#0c0c0c;font-size:7px">12</div>
<div class="a" style="left:309.5px;top:365.500px;width:1.600px;height:8.500px;background:#0c0c0c"></div>
<div class="t" style="left:315.1px;top:355.800px;color:#0c0c0c;font-size:7px">14</div>
<div class="a" style="left:355.6px;top:365.500px;width:1.600px;height:8.500px;background:#0c0c0c"></div>
<div class="t" style="left:361.2px;top:355.800px;color:#0c0c0c;font-size:7px">16</div>
<div class="a" style="left:401.6px;top:365.500px;width:1.600px;height:8.500px;background:#0c0c0c"></div>
<div class="t" style="left:407.2px;top:355.800px;color:#0c0c0c;font-size:7px">18</div>
<div class="a" style="left:447.7px;top:365.500px;width:1.600px;height:8.500px;background:#0c0c0c"></div>
<div class="t" style="left:453.3px;top:355.800px;color:#0c0c0c;font-size:7px">20</div>
<div class="a" style="left:493.8px;top:365.500px;width:1.600px;height:8.500px;background:#0c0c0c"></div>
<div class="t" style="left:499.4px;top:355.800px;color:#0c0c0c;font-size:7px">22</div>
<div class="a" style="left:539.9px;top:365.500px;width:1.600px;height:8.500px;background:#0c0c0c"></div>
<div class="t" style="left:545.5px;top:355.800px;color:#0c0c0c;font-size:7px">24</div>
<div class="f" style="left:568px;top:361px;width:38.500px;height:10px"></div>
<div class="t" style="left:570.500px;top:361.500px;color:#dcdcdc">1.00</div>
<svg class="a" style="left:611.5px;top:361.500px" width="11" height="11" viewBox="0 0 11 11"><path d="M1.500 1.500v8" stroke="#e0e0e0" stroke-width="1.200"/><path d="M6 2.500L3 5.500l3 3M9.500 2.500l-3 3 3 3" fill="none" stroke="#e0e0e0" stroke-width="1.100"/></svg>
<svg class="a" style="left:627px;top:361.500px" width="11" height="11" viewBox="0 0 11 11"><path d="M2 1.500v8" stroke="#e0e0e0" stroke-width="1.300"/><path d="M9 1.800v7.400L3.500 5.500z" fill="#e0e0e0"/></svg>
<svg class="a" style="left:643px;top:361.500px" width="11" height="11" viewBox="0 0 11 11"><path d="M2 1v9" stroke="#d03030" stroke-width="1.300"/><path d="M9.500 1.800v7.400L4 5.500z" fill="#e0e0e0"/></svg>
<svg class="a" style="left:660px;top:361.500px" width="11" height="11" viewBox="0 0 11 11"><path d="M8.500 1.500v8L2.500 5.500z" fill="#e0e0e0"/></svg>
<svg class="a" style="left:675.5px;top:361.500px" width="11" height="11" viewBox="0 0 11 11"><path d="M2.500 1.500v8l6-4z" fill="#e0e0e0"/></svg>
<svg class="a" style="left:691.5px;top:361.500px" width="11" height="11" viewBox="0 0 11 11"><path d="M9 1v9" stroke="#d03030" stroke-width="1.300"/><path d="M1.500 1.800v7.400L7 5.500z" fill="#e0e0e0"/></svg>
<svg class="a" style="left:707.5px;top:361.500px" width="11" height="11" viewBox="0 0 11 11"><path d="M9 1.500v8" stroke="#e0e0e0" stroke-width="1.300"/><path d="M2 1.800v7.400l5.500-3.700z" fill="#e0e0e0"/></svg>
<svg class="a" style="left:724px;top:361.500px" width="11" height="11" viewBox="0 0 11 11"><path d="M9.500 1.500v8" stroke="#e0e0e0" stroke-width="1.200"/><path d="M1.500 2.500l3 3-3 3M5 2.500l3 3-3 3" fill="none" stroke="#e0e0e0" stroke-width="1.100"/></svg>
<div class="grip" style="left:2.500px;top:379px;height:12px"></div>
<div class="f" style="left:9px;top:380px;width:37.500px;height:10.500px"></div><div class="t" style="left:11px;top:380.800px;color:#dcdcdc">1.00</div>
<div class="f" style="left:50px;top:380px;width:39px;height:10.500px"></div><div class="t" style="left:52px;top:380.800px;color:#dcdcdc">1.00</div>
<div class="a" style="left:93px;top:379.500px;width:393px;height:11px;background:#2b2b2b;border-radius:1px"></div>
<div class="a" style="left:94px;top:380px;width:199px;height:10px;background:linear-gradient(#6e6e6e,#606060);border-radius:1px"></div>
<div class="a" style="left:96.500px;top:381.500px;width:5px;height:7px;background:#747474;border:solid #3a3a3a;border-width:0 .8px .8px 0;box-sizing:border-box"></div>
<div class="a" style="left:285.500px;top:381.500px;width:5px;height:7px;background:#747474;border:solid #3a3a3a;border-width:0 .8px .8px 0;box-sizing:border-box"></div>
<div class="t" style="left:105px;top:380.800px;color:#e0e0e0">1</div>
<div class="t" style="left:276px;top:380.800px;color:#e0e0e0">24</div>
<div class="f" style="left:490px;top:380px;width:38px;height:10.500px"></div><div class="t" style="left:492px;top:380.800px;color:#dcdcdc">24.00</div>
<div class="f" style="left:531.500px;top:380px;width:38px;height:10.500px"></div><div class="t" style="left:533.500px;top:380.800px;color:#dcdcdc">48.00</div>
<svg class="a" style="left:574px;top:383px" width="7" height="5"><polygon points=".5,.5 6,.5 3.250,4" fill="#7a7a7a"/></svg>
<div class="f" style="left:584px;top:380px;width:57.500px;height:10.500px"></div><div class="t" style="left:586px;top:380.800px;color:#dcdcdc">No Anim Layer</div>
<svg class="a" style="left:644.500px;top:383px" width="7" height="5"><polygon points=".5,.5 6,.5 3.250,4" fill="#7a7a7a"/></svg>
<div class="f" style="left:655px;top:380px;width:57px;height:10.500px"></div><div class="t" style="left:657px;top:380.800px;color:#dcdcdc">No Character Set</div>
<svg class="a" style="left:714.500px;top:381.500px" width="11" height="8" viewBox="0 0 11 8"><circle cx="2.500" cy="4" r="1.800" fill="none" stroke="#c8c8c8" stroke-width="1"/><path d="M4.300 4h6M8.500 4v2M10 4v1.600" stroke="#c8c8c8" stroke-width="1"/></svg>
<svg class="a" style="left:728px;top:380.500px" width="9" height="9" viewBox="0 0 9 9"><rect x=".3" y=".3" width="8.400" height="8.400" fill="#f0f0f0" stroke="#888" stroke-width=".4"/><rect x=".3" y=".3" width="8.400" height="1.800" fill="#4a8ad8"/><path d="M1.500 4h6M1.500 5.500h6M1.500 7h6" stroke="#e04040" stroke-width=".7"/><path d="M5 2.500v6" stroke="#c02020" stroke-width=".8"/></svg>
<div class="grip" style="left:2.500px;top:396px;height:13px"></div>
<div class="t" style="left:14px;top:397.500px;color:#d0d0d0;transform:scaleX(.76)">MEL</div>
<div class="f" style="left:34px;top:396px;width:345px;height:13px"></div>
<div class="a" style="left:381px;top:399px;width:.8px;height:1px;background:#888"></div>
<div class="a" style="left:383px;top:396px;width:344px;height:13px;background:#000;border-radius:1px"></div>
<svg class="a" style="left:729px;top:398px" width="8" height="9" viewBox="0 0 8 9"><rect x=".3" y=".3" width="7.400" height="8.400" fill="#e8e8e8" stroke="#888" stroke-width=".4"/><rect x=".3" y=".3" width="7.400" height="2.200" fill="#4a8ad8"/><path d="M1 5h6M1 7h6" stroke="#444" stroke-width=".8"/></svg>
<div class="grip" style="left:2.500px;top:414.500px;height:12px"></div>
<div class="a" style="left:7.500px;top:413.800px;width:728.500px;height:14px;background:#464646;box-shadow:0 0 0 .7px #333, inset 0 .7px 0 #555"></div>
<div class="t" style="left:14.500px;top:416px;color:#d0d0d0;transform:scaleX(.811)">Scale Tool: Use manipulator to scale object(s). Use edit mode to change pivot (INSERT).</div>
<svg class="a" style="left:729px;top:417px" width="10" height="10"><path d="M9 2L2 9M9 5L5 9M9 8L8 9" stroke="#777" stroke-width=".8"/></svg>
<div class="wm" style="left:52px;top:301.500px;font-size:15.500px;line-height:20px">까만콩이 몸에 좋다 / BY. 까만콩</div>
<div class="wm" style="left:75.300px;top:318.300px;font-size:12px;line-height:16px;transform:scaleX(.962);transform-origin:0 0">Copyright©2014 KIMKYUNGJU</div>
</body></html>
